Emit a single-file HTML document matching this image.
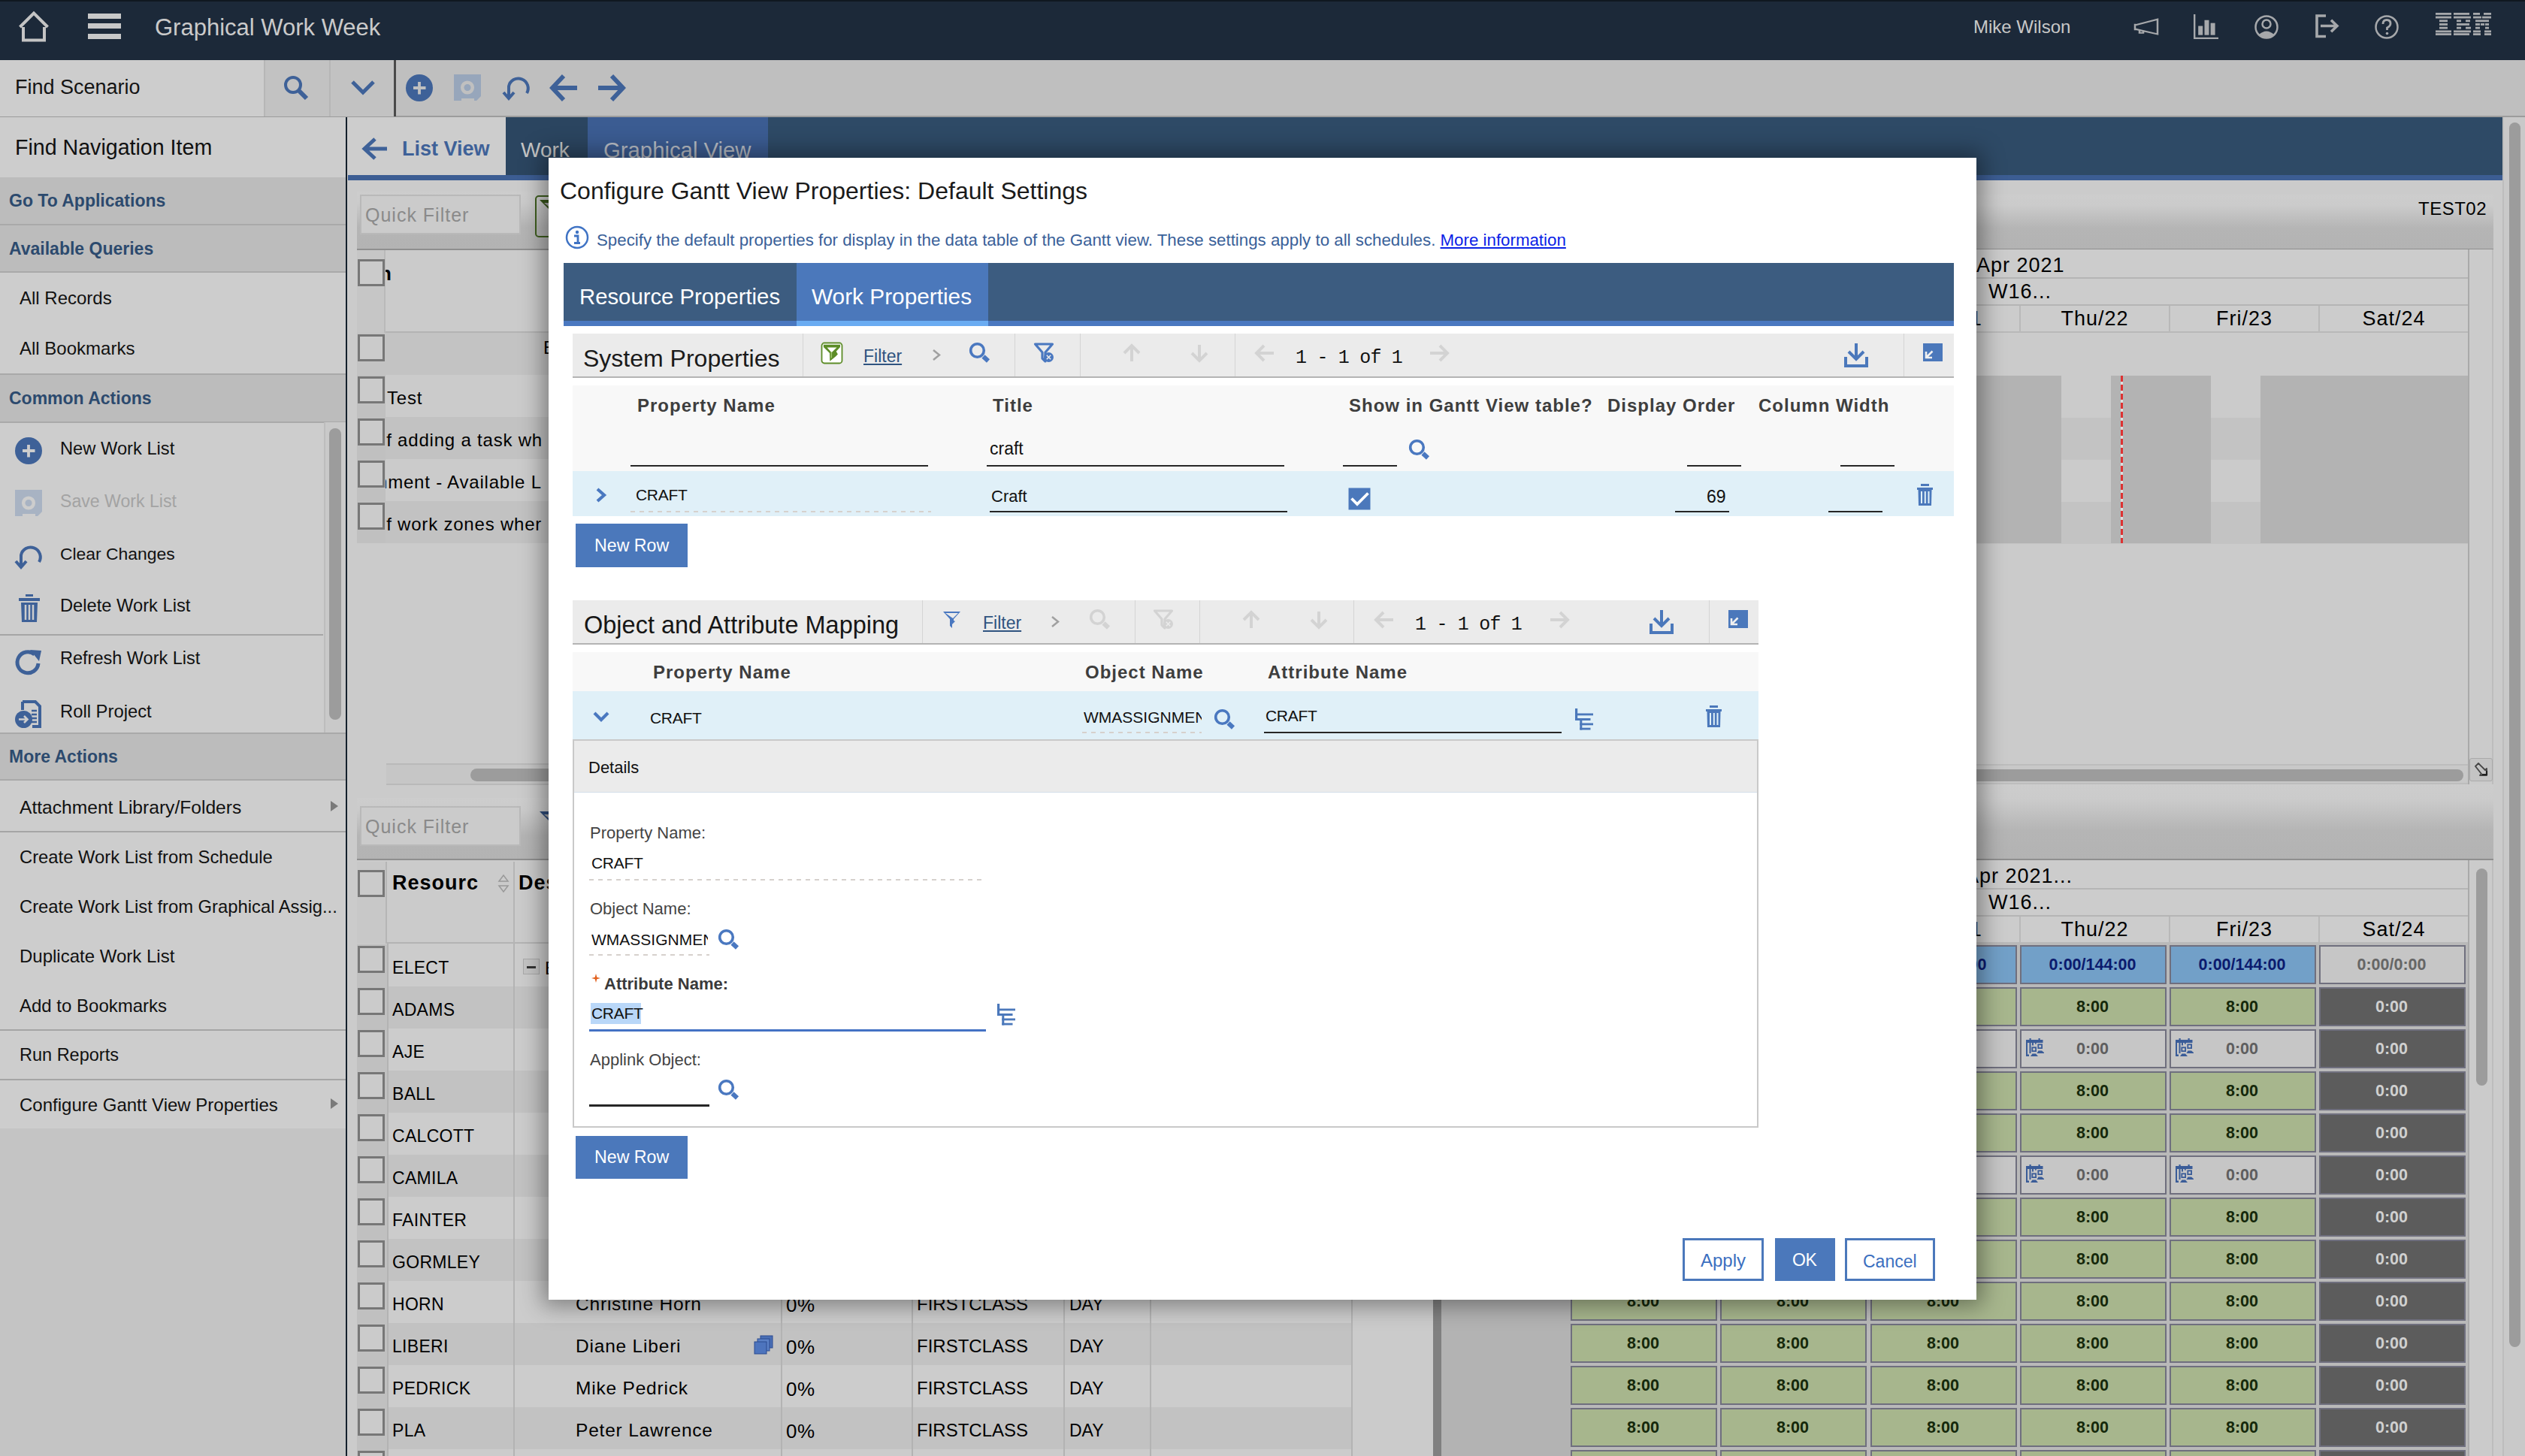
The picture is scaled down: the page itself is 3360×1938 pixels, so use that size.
<!DOCTYPE html>
<html><head><meta charset="utf-8">
<style>
*{box-sizing:border-box;margin:0;padding:0}
html,body{width:3360px;height:1938px;overflow:hidden;background:#c4c4c4;font-family:"Liberation Sans",sans-serif;color:#000}
.a{position:absolute}
.t{position:absolute;white-space:nowrap;line-height:1}
svg{position:absolute;overflow:visible}
/* header */
#hdr{left:0;top:0;width:3360px;height:80px;background:#1c2939;border-top:2px solid #101820}
#tb{left:0;top:80px;width:3360px;height:76px;background:#bfbfbf;border-bottom:2px solid #9c9c9c}
/* sidebar */
#side{left:0;top:157px;width:460px;height:1781px;background:#c4c4c4}
.sh{position:absolute;left:0;width:460px;background:#bcbcbc;border-bottom:2px solid #a9a9a9}
.sh span{position:absolute;left:12px;top:50%;transform:translateY(-50%);font-weight:bold;font-size:23px;color:#2c4a6e;white-space:nowrap;line-height:1}
.si{position:absolute;left:0;width:460px;background:#cdcdcd}
.si span{position:absolute;left:26px;top:50%;transform:translateY(-50%);font-size:24px;color:#111;white-space:nowrap;line-height:1}
/* modal */
#modal{left:730px;top:210px;width:1900px;height:1520px;background:#fff;box-shadow:0 0 30px 6px rgba(0,0,0,.35)}
</style></head><body>
<div id="hdr" class="a">
<svg style="left:24px;top:12px" width="42" height="44" viewBox="0 0 42 44"><path d="M2.5 22 L21 3.5 L39.5 22 M7 22 V39.5 H35 V22" fill="none" stroke="#c4c4c4" stroke-width="4" stroke-linejoin="miter"/></svg>
<div class="a" style="left:117px;top:16px;width:44px;height:7px;background:#c8c8c8"></div>
<div class="a" style="left:117px;top:29px;width:44px;height:7px;background:#c8c8c8"></div>
<div class="a" style="left:117px;top:43px;width:44px;height:7px;background:#c8c8c8"></div>
<div class="t" style="left:206px;top:19px;font-size:31px;color:#cacaca">Graphical Work Week</div>
<div class="t" style="left:2626px;top:22px;font-size:24px;color:#c8c8c8">Mike Wilson</div>
<svg style="left:2839px;top:22px" width="34" height="24" preserveAspectRatio="none" viewBox="0 0 34 28"><path d="M2 11 L32 2 V25 L2 17 Z M2 9 V19 M8 18 V23 H13 V20" fill="none" stroke="#a6a8ab" stroke-width="2.5"/></svg>
<svg style="left:2919px;top:17px" width="34" height="33" viewBox="0 0 34 34" preserveAspectRatio="none"><path d="M1.2 0 V32.8 H33" fill="none" stroke="#a6a8ab" stroke-width="2.4"/><rect x="6.2" y="16" width="6" height="12.5" fill="#a6a8ab"/><rect x="14.5" y="8" width="6" height="20.5" fill="#a6a8ab"/><rect x="22.6" y="12" width="6" height="16.5" fill="#a6a8ab"/></svg>
<svg style="left:3000px;top:18px" width="34" height="34" viewBox="0 0 34 34"><circle cx="16" cy="16" r="14.5" fill="none" stroke="#a6a8ab" stroke-width="2.5"/><circle cx="16" cy="12" r="5.5" fill="none" stroke="#a6a8ab" stroke-width="2.5"/><path d="M6 26 Q16 17 26 26 Q16 34 6 26Z" fill="#a6a8ab"/></svg>
<svg style="left:3079px;top:17px" width="36" height="33" preserveAspectRatio="none" viewBox="0 0 36 34"><path d="M16 2 H4 V30.5 H16 M9 16 H30 M23 8 L31 16 L23 24" fill="none" stroke="#a6a8ab" stroke-width="3.6"/></svg>
<svg style="left:3160px;top:18px" width="34" height="34" viewBox="0 0 34 34"><circle cx="16" cy="16" r="14.5" fill="none" stroke="#a6a8ab" stroke-width="2.5"/><path d="M11 12 Q11 6.5 16 6.5 Q21 6.5 21 11.5 Q21 14.5 16.5 17 V20" fill="none" stroke="#a6a8ab" stroke-width="2.8"/><circle cx="16.5" cy="24.5" r="1.8" fill="#a6a8ab"/></svg>
<svg style="left:3241px;top:15px" width="74" height="30" viewBox="0 0 74 32" preserveAspectRatio="none"><g fill="#a6a8ab">
<rect x="0" y="0" width="21" height="3"/><rect x="0" y="5" width="21" height="3"/><rect x="5" y="10" width="11" height="3"/><rect x="5" y="15" width="11" height="3"/><rect x="5" y="20" width="11" height="3"/><rect x="0" y="25" width="21" height="3"/><rect x="0" y="29" width="21" height="3"/>
<rect x="24" y="0" width="21" height="3"/><rect x="24" y="5" width="23" height="3"/><rect x="28" y="10" width="6" height="3"/><rect x="40" y="10" width="6" height="3"/><rect x="28" y="15" width="17" height="3"/><rect x="28" y="20" width="6" height="3"/><rect x="40" y="20" width="7" height="3"/><rect x="24" y="25" width="23" height="3"/><rect x="24" y="29" width="21" height="3"/>
<rect x="50" y="0" width="9" height="3"/><rect x="64" y="0" width="10" height="3"/><rect x="50" y="5" width="11" height="3"/><rect x="62" y="5" width="12" height="3"/><rect x="53" y="10" width="18" height="3"/><rect x="53" y="15" width="6" height="3"/><rect x="60" y="15" width="5" height="3"/><rect x="66" y="15" width="5" height="3"/><rect x="53" y="20" width="6" height="3"/><rect x="66" y="20" width="5" height="3"/><rect x="50" y="25" width="10" height="3"/><rect x="65" y="25" width="9" height="3"/><rect x="50" y="29" width="10" height="3"/><rect x="65" y="29" width="9" height="3"/>
</g></svg>
</div>
<div id="tb" class="a">
<div class="a" style="left:0;top:0;width:351px;height:75px;background:#cdcdcd"></div>
<div class="t" style="left:20px;top:23px;font-size:27px;color:#141414">Find Scenario</div>
<div class="a" style="left:351px;top:0;width:89px;height:75px;background:#c2c2c2;border-left:2px solid #b6b6b6;border-right:2px solid #b6b6b6"></div>
<div class="a" style="left:440px;top:0;width:85px;height:75px;background:#c2c2c2"></div>
<div class="a" style="left:524px;top:0;width:3px;height:75px;background:#4a4a4a"></div>
<svg style="left:377px;top:100px;top:20px" width="36" height="36" viewBox="0 0 36 36"><circle cx="13" cy="13" r="10" fill="none" stroke="#3e6198" stroke-width="4"/><path d="M21 21 L31 31" stroke="#3e6198" stroke-width="6"/></svg>
<svg style="left:466px;top:26px" width="36" height="22" viewBox="0 0 36 22"><path d="M3 3 L17 17 L31 3" fill="none" stroke="#3e6198" stroke-width="5"/></svg>
<svg style="left:540px;top:19px" width="36" height="36" viewBox="0 0 36 36"><circle cx="18" cy="18" r="18" fill="#3e6198"/><path d="M18 10 V26.5 M10 18 H26.5" stroke="#c0c0c0" stroke-width="3.8"/></svg>
<svg style="left:604px;top:19px" width="36" height="36" viewBox="0 0 36 36"><path d="M0 0 H36 V29 L30 35 H27 V32 H10 V35 H0 Z" fill="#97a6bb"/><circle cx="18" cy="17.5" r="6.8" fill="none" stroke="#c0c0c0" stroke-width="4.5"/></svg>
<svg style="left:668px;top:19px" width="38" height="38" viewBox="0 0 38 38"><path d="M9 30 V16 A13 13 0 1 1 33 25" fill="none" stroke="#3e6198" stroke-width="4"/><path d="M2 24 L9 32 L16 24" fill="none" stroke="#3e6198" stroke-width="4"/></svg>
<svg style="left:731px;top:18px" width="38" height="38" viewBox="0 0 38 38"><path d="M37 19 H6 M19 3 L4 19 L19 35" fill="none" stroke="#3e6198" stroke-width="5.8"/></svg>
<svg style="left:795px;top:18px" width="38" height="38" viewBox="0 0 38 38"><path d="M1 19 H32 M19 3 L34 19 L19 35" fill="none" stroke="#3e6198" stroke-width="5.8"/></svg>
</div>
<div id="side" class="a">
<div class="si" style="top:-1px;height:80px"><span style="left:20px;font-size:28.6px;color:#101010">Find Navigation Item</span></div>
<div class="sh" style="top:79px;height:64px"><span>Go To Applications</span></div>
<div class="sh" style="top:143px;height:63px"><span>Available Queries</span></div>
<div class="si" style="top:206px;height:67px"><span>All Records</span></div>
<div class="si" style="top:273px;height:67px"><span>All Bookmarks</span></div>
<div class="a" style="left:0;top:340px;width:460px;height:2px;background:#a9a9a9"></div>
<div class="sh" style="top:342px;height:64px"><span>Common Actions</span></div>
<div class="si" style="top:406px;height:412px;background:#cdcdcd"></div>
<div class="a" style="left:431px;top:405px;width:29px;height:413px;background:#c9c9c9;border-left:2px solid #bdbdbd"></div>
<div class="a" style="left:438px;top:413px;width:16px;height:388px;background:#9c9c9c;border-radius:8px"></div>
<div class="t" style="left:80px;top:429px;font-size:23.7px;color:#111">New Work List</div>
<div class="t" style="left:80px;top:499px;font-size:23.1px;color:#a3a3a3">Save Work List</div>
<div class="t" style="left:80px;top:569px;font-size:22.9px;color:#111">Clear Changes</div>
<div class="t" style="left:80px;top:638px;font-size:23.7px;color:#111">Delete Work List</div>
<div class="a" style="left:0;top:687px;width:430px;height:2px;background:#a5a5a5"></div>
<div class="t" style="left:80px;top:708px;font-size:23.5px;color:#111">Refresh Work List</div>
<div class="t" style="left:80px;top:778px;font-size:23.8px;color:#111">Roll Project</div>
<div class="a" style="left:0;top:818px;width:460px;height:2px;background:#a9a9a9"></div>
<div class="sh" style="top:820px;height:62px"><span>More Actions</span></div>
<div class="si" style="top:882px;height:463px"></div>
<div class="t" style="left:26px;top:906px;font-size:24.6px;color:#111">Attachment Library/Folders</div>
<div class="a" style="left:0;top:949px;width:460px;height:2px;background:#a5a5a5"></div>
<div class="t" style="left:26px;top:972px;font-size:23.8px;color:#111">Create Work List from Schedule</div>
<div class="t" style="left:26px;top:1038px;font-size:23.8px;color:#111">Create Work List from Graphical Assig...</div>
<div class="t" style="left:26px;top:1104px;font-size:24px;color:#111">Duplicate Work List</div>
<div class="t" style="left:26px;top:1170px;font-size:24px;color:#111">Add to Bookmarks</div>
<div class="a" style="left:0;top:1213px;width:460px;height:2px;background:#a5a5a5"></div>
<div class="t" style="left:26px;top:1236px;font-size:23.5px;color:#111">Run Reports</div>
<div class="a" style="left:0;top:1279px;width:460px;height:2px;background:#a5a5a5"></div>
<div class="t" style="left:26px;top:1302px;font-size:24px;color:#111">Configure Gantt View Properties</div>
<svg style="left:439px;top:908px" width="12" height="16" viewBox="0 0 12 16"><path d="M1 1 L11 8 L1 15Z" fill="#7a7a7a"/></svg>
<svg style="left:439px;top:1304px" width="12" height="16" viewBox="0 0 12 16"><path d="M1 1 L11 8 L1 15Z" fill="#7a7a7a"/></svg>
<svg style="left:20px;top:425px" width="36" height="36" viewBox="0 0 36 36"><circle cx="18" cy="18" r="18" fill="#3e6198"/><path d="M18 10 V26.5 M10 18 H26.5" stroke="#cdcdcd" stroke-width="3.8"/></svg>
<svg style="left:20px;top:495px" width="36" height="36" viewBox="0 0 36 36"><path d="M0 0 H36 V29 L30 35 H27 V32 H10 V35 H0 Z" fill="#a8b3c3"/><circle cx="18" cy="17.5" r="6.8" fill="none" stroke="#cdcdcd" stroke-width="4.5"/></svg>
<svg style="left:19px;top:566px" width="38" height="36" viewBox="0 0 38 36"><path d="M9 30 V16 A13 13 0 1 1 33 25" fill="none" stroke="#3e6198" stroke-width="4"/><path d="M2 24 L9 32 L16 24" fill="none" stroke="#3e6198" stroke-width="4"/></svg>
<svg style="left:25px;top:634px" width="28" height="38" viewBox="0 0 28 38"><rect x="9" y="0" width="10" height="3" fill="#3e6198"/><rect x="0" y="5" width="28" height="4" fill="#3e6198"/><path d="M3 11 H25 L24 37 H4 Z" fill="#3e6198"/><path d="M9 14 V34 M14 14 V34 M19 14 V34" stroke="#cdcdcd" stroke-width="2.5"/></svg>
<svg style="left:19px;top:706px" width="38" height="38" viewBox="0 0 38 38"><path d="M32 20 A14 14 0 1 1 27 8" fill="none" stroke="#3e6198" stroke-width="5"/><path d="M21 2 L36 3 L33 17 Z" fill="#3e6198"/></svg>
<svg style="left:19px;top:931px;top:774px" width="38" height="40" viewBox="0 0 38 40"><path d="M11 3 H28 L34 9 V36 H24" fill="none" stroke="#3e6198" stroke-width="4"/><path d="M11 3 V14" stroke="#3e6198" stroke-width="4"/><path d="M23 15 H30 M23 20 H30 M23 25 H30 M23 30 H30" stroke="#3e6198" stroke-width="2.5"/><circle cx="12.5" cy="26.5" r="11.5" fill="#3e6198"/><path d="M6 26.5 H17 M13 22 L17.5 26.5 L13 31" fill="none" stroke="#cdcdcd" stroke-width="2.6"/></svg>
</div>
<div id="main"><div class="a" style="left:460px;top:156px;width:2px;height:1782px;background:#14202c"></div>
<div class="a" style="left:462px;top:156px;width:2868px;height:1782px;background:#cbcbcb"></div>
<div class="a" style="left:463px;top:156px;width:2867px;height:77px;background:#2e4a66"></div>
<div class="a" style="left:463px;top:156px;width:210px;height:77px;background:#cdcdcd"></div>
<div class="a" style="left:673px;top:156px;width:109px;height:77px;background:#2b4560"></div>
<div class="a" style="left:782px;top:156px;width:240px;height:77px;background:#3b5c92"></div>
<div class="a" style="left:463px;top:233px;width:2867px;height:7px;background:#3c5d93"></div>
<svg style="left:482px;top:182px" width="34" height="32" viewBox="0 0 34 32"><path d="M33 16 H5 M17 3 L3 16 L17 29" fill="none" stroke="#3e6198" stroke-width="5"/></svg>
<div class="t" style="left:535px;top:185px;font-size:27px;font-weight:bold;color:#3e6198">List View</div>
<div class="t" style="left:693px;top:186px;font-size:28px;color:#c5c5c5">Work</div>
<div class="t" style="left:803px;top:185px;font-size:29.3px;color:#b9bec6">Graphical View</div>
<div class="a" style="left:475px;top:255px;width:300px;height:78px;background:linear-gradient(#cdcdcd 0%,#cbcbcb 20%,#b5b5b5 62%,#b3b3b3 100%);border-bottom:2px solid #8f8f8f"></div>
<div class="a" style="left:479px;top:259px;width:214px;height:53px;background:#cbcbcb;border:2px solid #b9b9b9"></div>
<div class="t" style="left:486px;top:274px;font-size:25px;letter-spacing:1px;color:#8a8a8a">Quick Filter</div>
<div class="a" style="left:712px;top:260px;width:44px;height:56px;border:2.5px solid #3e5e1e;border-radius:5px"></div>
<svg style="left:718px;top:266px" width="30" height="30" viewBox="0 0 30 30"><path d="M0 0 H28 L17 12 V26 L12 22 V12 Z" fill="#38561a"/><path d="M6 4 H22 L14.5 11Z" fill="#aaa"/></svg>
<div class="a" style="left:475px;top:333px;width:300px;height:110px;background:#cbcbcb;border-bottom:2px solid #b3b3b3"></div>
<div class="a" style="left:475px;top:333px;width:38px;height:110px;background:#c6c6c6;border-right:2px solid #b9b9b9"></div>
<div class="a" style="left:476px;top:345px;width:36px;height:36px;background:#cbcbcb;border:3px solid #777"></div>
<div class="a" style="left:513px;top:335px;width:15px;height:50px;overflow:hidden"><div class="t" style="left:-8px;top:16px;font-size:26px;font-weight:bold">n</div></div>
<div class="a" style="left:475px;top:443px;width:300px;height:56px;background:#c3c3c3"></div>
<div class="a" style="left:476px;top:445px;width:36px;height:36px;background:#cbcbcb;border:3px solid #777"></div>
<div class="t" style="left:723px;top:451px;font-size:24px">E</div>
<div class="a" style="left:475px;top:499px;width:300px;height:56px;background:#cbcbcb"></div>
<div class="a" style="left:475px;top:499px;width:38px;height:56px;background:#c0c0c0"></div>
<div class="a" style="left:476px;top:501px;width:36px;height:36px;background:#cbcbcb;border:3px solid #777"></div>
<div class="a" style="left:513px;top:499px;width:260px;height:56px;overflow:hidden"><div class="t" style="left:2px;top:19px;font-size:24px;letter-spacing:0.8px">Test</div></div>
<div class="a" style="left:475px;top:555px;width:300px;height:56px;background:#c2c2c2"></div>
<div class="a" style="left:475px;top:555px;width:38px;height:56px;background:#c0c0c0"></div>
<div class="a" style="left:476px;top:557px;width:36px;height:36px;background:#cbcbcb;border:3px solid #777"></div>
<div class="a" style="left:513px;top:555px;width:260px;height:56px;overflow:hidden"><div class="t" style="left:-13px;top:19px;font-size:24px;letter-spacing:0.8px">of adding a task wh</div></div>
<div class="a" style="left:475px;top:611px;width:300px;height:56px;background:#cbcbcb"></div>
<div class="a" style="left:475px;top:611px;width:38px;height:56px;background:#c0c0c0"></div>
<div class="a" style="left:476px;top:613px;width:36px;height:36px;background:#cbcbcb;border:3px solid #777"></div>
<div class="a" style="left:513px;top:611px;width:260px;height:56px;overflow:hidden"><div class="t" style="left:-11px;top:19px;font-size:24px;letter-spacing:0.8px">nment - Available L</div></div>
<div class="a" style="left:475px;top:667px;width:300px;height:56px;background:#c2c2c2"></div>
<div class="a" style="left:475px;top:667px;width:38px;height:56px;background:#c0c0c0"></div>
<div class="a" style="left:476px;top:669px;width:36px;height:36px;background:#cbcbcb;border:3px solid #777"></div>
<div class="a" style="left:513px;top:667px;width:260px;height:56px;overflow:hidden"><div class="t" style="left:-13px;top:19px;font-size:24px;letter-spacing:0.8px">of work zones wher</div></div>
<div class="a" style="left:514px;top:1016px;width:300px;height:29px;background:#c6c6c6;border-top:2px solid #b9b9b9;border-bottom:2px solid #b9b9b9"></div>
<div class="a" style="left:626px;top:1023px;width:300px;height:17px;background:#9c9c9c;border-radius:9px"></div>
<div class="a" style="left:475px;top:1062px;width:1435px;height:83px;background:linear-gradient(#cdcdcd 0%,#cbcbcb 20%,#b5b5b5 62%,#b3b3b3 100%);border-bottom:2px solid #8f8f8f"></div>
<div class="a" style="left:479px;top:1073px;width:214px;height:53px;background:#cbcbcb;border:2px solid #b9b9b9"></div>
<div class="t" style="left:486px;top:1088px;font-size:25px;letter-spacing:1px;color:#8a8a8a">Quick Filter</div>
<svg style="left:718px;top:1080px" width="30" height="30" viewBox="0 0 30 30"><path d="M0 0 H28 L17 12 V26 L12 22 V12 Z" fill="#2f4c7a"/><path d="M6 4 H22 L14.5 11Z" fill="#aaa"/></svg>
<div class="a" style="left:475px;top:1147px;width:1435px;height:109px;background:#cbcbcb;border-bottom:2px solid #b3b3b3"></div>
<div class="a" style="left:475px;top:1147px;width:40px;height:109px;background:#c8c8c8;border-right:2px solid #b5b5b5"></div>
<div class="a" style="left:476px;top:1158px;width:36px;height:36px;background:#cbcbcb;border:3px solid #777"></div>
<div class="t" style="left:522px;top:1162px;font-size:27px;letter-spacing:1px;font-weight:bold">Resourc</div>
<svg style="left:663px;top:1163px" width="14" height="26" viewBox="0 0 14 26"><path d="M1 10 L7 2 L13 10 Z M1 16 L7 24 L13 16 Z" fill="none" stroke="#999" stroke-width="1.5"/></svg>
<div class="a" style="left:683px;top:1147px;width:2px;height:109px;background:#b5b5b5"></div>
<div class="t" style="left:690px;top:1162px;font-size:27px;letter-spacing:1px;font-weight:bold">Description</div>
<div class="a" style="left:475px;top:1257px;width:1325px;height:56px;background:#cccccc"></div>
<div class="a" style="left:475px;top:1257px;width:40px;height:56px;background:#c0c0c0"></div>
<div class="a" style="left:476px;top:1259px;width:36px;height:36px;background:#cbcbcb;border:3px solid #777"></div>
<div class="t" style="left:522px;top:1277px;font-size:23px;letter-spacing:0.3px">ELECT</div>
<div class="a" style="left:475px;top:1313px;width:1325px;height:56px;background:#c2c2c2"></div>
<div class="a" style="left:475px;top:1313px;width:40px;height:56px;background:#c0c0c0"></div>
<div class="a" style="left:476px;top:1315px;width:36px;height:36px;background:#cbcbcb;border:3px solid #777"></div>
<div class="t" style="left:522px;top:1333px;font-size:23px;letter-spacing:0.3px">ADAMS</div>
<div class="a" style="left:475px;top:1369px;width:1325px;height:56px;background:#cccccc"></div>
<div class="a" style="left:475px;top:1369px;width:40px;height:56px;background:#c0c0c0"></div>
<div class="a" style="left:476px;top:1371px;width:36px;height:36px;background:#cbcbcb;border:3px solid #777"></div>
<div class="t" style="left:522px;top:1389px;font-size:23px;letter-spacing:0.3px">AJE</div>
<div class="a" style="left:475px;top:1425px;width:1325px;height:56px;background:#c2c2c2"></div>
<div class="a" style="left:475px;top:1425px;width:40px;height:56px;background:#c0c0c0"></div>
<div class="a" style="left:476px;top:1427px;width:36px;height:36px;background:#cbcbcb;border:3px solid #777"></div>
<div class="t" style="left:522px;top:1445px;font-size:23px;letter-spacing:0.3px">BALL</div>
<div class="a" style="left:475px;top:1481px;width:1325px;height:56px;background:#cccccc"></div>
<div class="a" style="left:475px;top:1481px;width:40px;height:56px;background:#c0c0c0"></div>
<div class="a" style="left:476px;top:1483px;width:36px;height:36px;background:#cbcbcb;border:3px solid #777"></div>
<div class="t" style="left:522px;top:1501px;font-size:23px;letter-spacing:0.3px">CALCOTT</div>
<div class="a" style="left:475px;top:1537px;width:1325px;height:56px;background:#c2c2c2"></div>
<div class="a" style="left:475px;top:1537px;width:40px;height:56px;background:#c0c0c0"></div>
<div class="a" style="left:476px;top:1539px;width:36px;height:36px;background:#cbcbcb;border:3px solid #777"></div>
<div class="t" style="left:522px;top:1557px;font-size:23px;letter-spacing:0.3px">CAMILA</div>
<div class="a" style="left:475px;top:1593px;width:1325px;height:56px;background:#cccccc"></div>
<div class="a" style="left:475px;top:1593px;width:40px;height:56px;background:#c0c0c0"></div>
<div class="a" style="left:476px;top:1595px;width:36px;height:36px;background:#cbcbcb;border:3px solid #777"></div>
<div class="t" style="left:522px;top:1613px;font-size:23px;letter-spacing:0.3px">FAINTER</div>
<div class="a" style="left:475px;top:1649px;width:1325px;height:56px;background:#c2c2c2"></div>
<div class="a" style="left:475px;top:1649px;width:40px;height:56px;background:#c0c0c0"></div>
<div class="a" style="left:476px;top:1651px;width:36px;height:36px;background:#cbcbcb;border:3px solid #777"></div>
<div class="t" style="left:522px;top:1669px;font-size:23px;letter-spacing:0.3px">GORMLEY</div>
<div class="a" style="left:475px;top:1705px;width:1325px;height:56px;background:#cccccc"></div>
<div class="a" style="left:475px;top:1705px;width:40px;height:56px;background:#c0c0c0"></div>
<div class="a" style="left:476px;top:1707px;width:36px;height:36px;background:#cbcbcb;border:3px solid #777"></div>
<div class="t" style="left:522px;top:1725px;font-size:23px;letter-spacing:0.3px">HORN</div>
<div class="t" style="left:766px;top:1724px;font-size:24.5px;letter-spacing:0.8px">Christine Horn</div>
<div class="t" style="left:1046px;top:1724px;font-size:26px;letter-spacing:0.5px">0%</div>
<div class="t" style="left:1220px;top:1724px;font-size:24px">FIRSTCLASS</div>
<div class="t" style="left:1423px;top:1725px;font-size:23px">DAY</div>
<div class="a" style="left:475px;top:1761px;width:1325px;height:56px;background:#c2c2c2"></div>
<div class="a" style="left:475px;top:1761px;width:40px;height:56px;background:#c0c0c0"></div>
<div class="a" style="left:476px;top:1763px;width:36px;height:36px;background:#cbcbcb;border:3px solid #777"></div>
<div class="t" style="left:522px;top:1781px;font-size:23px;letter-spacing:0.3px">LIBERI</div>
<div class="t" style="left:766px;top:1780px;font-size:24.5px;letter-spacing:0.8px">Diane Liberi</div>
<div class="t" style="left:1046px;top:1780px;font-size:26px;letter-spacing:0.5px">0%</div>
<div class="t" style="left:1220px;top:1780px;font-size:24px">FIRSTCLASS</div>
<div class="t" style="left:1423px;top:1781px;font-size:23px">DAY</div>
<div class="a" style="left:475px;top:1817px;width:1325px;height:56px;background:#cccccc"></div>
<div class="a" style="left:475px;top:1817px;width:40px;height:56px;background:#c0c0c0"></div>
<div class="a" style="left:476px;top:1819px;width:36px;height:36px;background:#cbcbcb;border:3px solid #777"></div>
<div class="t" style="left:522px;top:1837px;font-size:23px;letter-spacing:0.3px">PEDRICK</div>
<div class="t" style="left:766px;top:1836px;font-size:24.5px;letter-spacing:0.8px">Mike Pedrick</div>
<div class="t" style="left:1046px;top:1836px;font-size:26px;letter-spacing:0.5px">0%</div>
<div class="t" style="left:1220px;top:1836px;font-size:24px">FIRSTCLASS</div>
<div class="t" style="left:1423px;top:1837px;font-size:23px">DAY</div>
<div class="a" style="left:475px;top:1873px;width:1325px;height:56px;background:#c2c2c2"></div>
<div class="a" style="left:475px;top:1873px;width:40px;height:56px;background:#c0c0c0"></div>
<div class="a" style="left:476px;top:1875px;width:36px;height:36px;background:#cbcbcb;border:3px solid #777"></div>
<div class="t" style="left:522px;top:1893px;font-size:23px;letter-spacing:0.3px">PLA</div>
<div class="t" style="left:766px;top:1892px;font-size:24.5px;letter-spacing:0.8px">Peter Lawrence</div>
<div class="t" style="left:1046px;top:1892px;font-size:26px;letter-spacing:0.5px">0%</div>
<div class="t" style="left:1220px;top:1892px;font-size:24px">FIRSTCLASS</div>
<div class="t" style="left:1423px;top:1893px;font-size:23px">DAY</div>
<div class="a" style="left:475px;top:1929px;width:1325px;height:56px;background:#cccccc"></div>
<div class="a" style="left:475px;top:1929px;width:40px;height:56px;background:#c0c0c0"></div>
<div class="a" style="left:476px;top:1931px;width:36px;height:36px;background:#cbcbcb;border:3px solid #777"></div>
<div class="t" style="left:766px;top:1948px;font-size:24.5px;letter-spacing:0.8px"></div>
<div class="t" style="left:1046px;top:1948px;font-size:26px;letter-spacing:0.5px">0%</div>
<div class="t" style="left:1220px;top:1948px;font-size:24px">FIRSTCLASS</div>
<div class="t" style="left:1423px;top:1949px;font-size:23px">DAY</div>
<div class="a" style="left:515px;top:1256px;width:2px;height:700px;background:#b3b3b3"></div>
<div class="a" style="left:683px;top:1256px;width:2px;height:700px;background:#b3b3b3"></div>
<div class="a" style="left:1039px;top:1256px;width:2px;height:700px;background:#b3b3b3"></div>
<div class="a" style="left:1213px;top:1256px;width:2px;height:700px;background:#b3b3b3"></div>
<div class="a" style="left:1415px;top:1256px;width:2px;height:700px;background:#b3b3b3"></div>
<div class="a" style="left:1530px;top:1256px;width:2px;height:700px;background:#b3b3b3"></div>
<div class="a" style="left:1798px;top:1256px;width:2px;height:700px;background:#b3b3b3"></div>
<div class="a" style="left:696px;top:1276px;width:22px;height:21px;background:#c4c4c4;border:1px solid #a9a9a9"></div><div class="a" style="left:701px;top:1286px;width:12px;height:3px;background:#333"></div>
<div class="t" style="left:725px;top:1277px;font-size:24px;letter-spacing:0.8px">Electrician</div>
<svg style="left:1004px;top:1778px" width="24" height="24" viewBox="0 0 24 24"><rect x="8" y="0" width="16" height="16" fill="#4a6fb5" stroke="#2a4a90"/><rect x="4" y="4" width="16" height="16" fill="#5a80c5" stroke="#2a4a90"/><rect x="0" y="8" width="16" height="16" fill="#4d74bd" stroke="#2a4a90"/></svg>
<div class="a" style="left:1907px;top:1145px;width:11px;height:793px;background:#808080"></div>
<div class="a" style="left:1907px;top:250px;width:11px;height:800px;background:#808080"></div>
<div class="a" style="left:1918px;top:259px;width:1400px;height:74px;background:linear-gradient(#cdcdcd 0%,#cbcbcb 20%,#b5b5b5 62%,#b3b3b3 100%);border-bottom:2px solid #8f8f8f"></div>
<div class="t" style="left:3218px;top:266px;font-size:24px;letter-spacing:0.5px">TEST02</div>
<div class="a" style="left:1918px;top:332px;width:1366px;height:111px;background:#cccccc"></div>
<div class="a" style="left:1918px;top:369px;width:1366px;height:2px;background:#b5b5b5"></div>
<div class="a" style="left:1918px;top:405px;width:1366px;height:2px;background:#b5b5b5"></div>
<div class="a" style="left:1918px;top:441px;width:1366px;height:3px;background:#b9b9b9"></div>
<div class="t" style="left:2630px;top:340px;font-size:27px;letter-spacing:1px">Apr 2021</div>
<div class="t" style="left:2646px;top:375px;font-size:27px;letter-spacing:1px">W16...</div>
<div class="a" style="left:2089px;top:407px;width:2px;height:34px;background:#b9b9b9"></div>
<div class="t" style="left:2090px;top:411px;width:199px;text-align:center;font-size:27px;letter-spacing:1px">Mon/19</div>
<div class="a" style="left:2288px;top:407px;width:2px;height:34px;background:#b9b9b9"></div>
<div class="t" style="left:2289px;top:411px;width:199px;text-align:center;font-size:27px;letter-spacing:1px">Tue/20</div>
<div class="a" style="left:2488px;top:407px;width:2px;height:34px;background:#b9b9b9"></div>
<div class="t" style="left:2489px;top:411px;width:199px;text-align:center;font-size:27px;letter-spacing:1px">Wed/21</div>
<div class="a" style="left:2687px;top:407px;width:2px;height:34px;background:#b9b9b9"></div>
<div class="t" style="left:2688px;top:411px;width:199px;text-align:center;font-size:27px;letter-spacing:1px">Thu/22</div>
<div class="a" style="left:2886px;top:407px;width:2px;height:34px;background:#b9b9b9"></div>
<div class="t" style="left:2887px;top:411px;width:199px;text-align:center;font-size:27px;letter-spacing:1px">Fri/23</div>
<div class="a" style="left:3085px;top:407px;width:2px;height:34px;background:#b9b9b9"></div>
<div class="t" style="left:3086px;top:411px;width:199px;text-align:center;font-size:27px;letter-spacing:1px">Sat/24</div>
<div class="a" style="left:3284px;top:332px;width:2px;height:111px;background:#a9a9a9"></div>
<div class="a" style="left:1918px;top:443px;width:1366px;height:574px;background:#cbcbcb"></div>
<div class="a" style="left:1918px;top:500px;width:1366px;height:56px;background:#cbcbcb"></div>
<div class="a" style="left:1918px;top:556px;width:1366px;height:56px;background:#c3c3c3"></div>
<div class="a" style="left:1918px;top:612px;width:1366px;height:56px;background:#cbcbcb"></div>
<div class="a" style="left:1918px;top:668px;width:1366px;height:56px;background:#c3c3c3"></div>
<div class="a" style="left:1918px;top:500px;width:1366px;height:223px;background:#b3b3b3"></div>
<div class="a" style="left:2145px;top:500px;width:66px;height:56px;background:#cbcbcb"></div>
<div class="a" style="left:2145px;top:556px;width:66px;height:56px;background:#c3c3c3"></div>
<div class="a" style="left:2145px;top:612px;width:66px;height:56px;background:#cbcbcb"></div>
<div class="a" style="left:2145px;top:668px;width:66px;height:56px;background:#c3c3c3"></div>
<div class="a" style="left:2344px;top:500px;width:66px;height:56px;background:#cbcbcb"></div>
<div class="a" style="left:2344px;top:556px;width:66px;height:56px;background:#c3c3c3"></div>
<div class="a" style="left:2344px;top:612px;width:66px;height:56px;background:#cbcbcb"></div>
<div class="a" style="left:2344px;top:668px;width:66px;height:56px;background:#c3c3c3"></div>
<div class="a" style="left:2544px;top:500px;width:66px;height:56px;background:#cbcbcb"></div>
<div class="a" style="left:2544px;top:556px;width:66px;height:56px;background:#c3c3c3"></div>
<div class="a" style="left:2544px;top:612px;width:66px;height:56px;background:#cbcbcb"></div>
<div class="a" style="left:2544px;top:668px;width:66px;height:56px;background:#c3c3c3"></div>
<div class="a" style="left:2743px;top:500px;width:66px;height:56px;background:#cbcbcb"></div>
<div class="a" style="left:2743px;top:556px;width:66px;height:56px;background:#c3c3c3"></div>
<div class="a" style="left:2743px;top:612px;width:66px;height:56px;background:#cbcbcb"></div>
<div class="a" style="left:2743px;top:668px;width:66px;height:56px;background:#c3c3c3"></div>
<div class="a" style="left:2942px;top:500px;width:66px;height:56px;background:#cbcbcb"></div>
<div class="a" style="left:2942px;top:556px;width:66px;height:56px;background:#c3c3c3"></div>
<div class="a" style="left:2942px;top:612px;width:66px;height:56px;background:#cbcbcb"></div>
<div class="a" style="left:2942px;top:668px;width:66px;height:56px;background:#c3c3c3"></div>
<div class="a" style="left:2822px;top:500px;width:3px;height:223px;background:repeating-linear-gradient(#d33 0 8px,#ddd 8px 12px)"></div>
<div class="a" style="left:3284px;top:332px;width:34px;height:712px;background:#cbcbcb;border-left:2px solid #a9a9a9;border-right:2px solid #bdbdbd"></div>
<div class="a" style="left:1918px;top:1017px;width:1366px;height:27px;background:#c8c8c8;border-top:2px solid #bdbdbd;border-bottom:2px solid #bdbdbd"></div>
<div class="a" style="left:2200px;top:1024px;width:1078px;height:16px;background:#9c9c9c;border-radius:8px"></div>
<div class="a" style="left:3286px;top:1009px;width:31px;height:31px;background:#c4c4c4;border:1px solid #aaa;border-radius:3px"></div>
<svg style="left:3292px;top:1014px" width="22" height="22" viewBox="0 0 22 22"><path d="M2 6 L6 2 L15 11 L17 9 V18 H8 L10 16 Z" fill="none" stroke="#444" stroke-width="1.8" stroke-linejoin="round"/><path d="M11 17 H17 V12" fill="none" stroke="#222" stroke-width="2.2"/></svg>
<div class="a" style="left:1918px;top:1044px;width:1400px;height:101px;background:linear-gradient(#cdcdcd 0%,#cbcbcb 20%,#b5b5b5 62%,#b3b3b3 100%);border-bottom:2px solid #8f8f8f"></div>
<div class="a" style="left:1918px;top:1145px;width:1366px;height:111px;background:#cccccc"></div>
<div class="a" style="left:1918px;top:1182px;width:1366px;height:2px;background:#b5b5b5"></div>
<div class="a" style="left:1918px;top:1218px;width:1366px;height:2px;background:#b5b5b5"></div>
<div class="a" style="left:1918px;top:1254px;width:1366px;height:3px;background:#b9b9b9"></div>
<div class="t" style="left:2615px;top:1153px;font-size:27px;letter-spacing:1px">Apr 2021...</div>
<div class="t" style="left:2646px;top:1188px;font-size:27px;letter-spacing:1px">W16...</div>
<div class="a" style="left:2089px;top:1220px;width:2px;height:34px;background:#b9b9b9"></div>
<div class="t" style="left:2090px;top:1224px;width:199px;text-align:center;font-size:27px;letter-spacing:1px">Mon/19</div>
<div class="a" style="left:2288px;top:1220px;width:2px;height:34px;background:#b9b9b9"></div>
<div class="t" style="left:2289px;top:1224px;width:199px;text-align:center;font-size:27px;letter-spacing:1px">Tue/20</div>
<div class="a" style="left:2488px;top:1220px;width:2px;height:34px;background:#b9b9b9"></div>
<div class="t" style="left:2489px;top:1224px;width:199px;text-align:center;font-size:27px;letter-spacing:1px">Wed/21</div>
<div class="a" style="left:2687px;top:1220px;width:2px;height:34px;background:#b9b9b9"></div>
<div class="t" style="left:2688px;top:1224px;width:199px;text-align:center;font-size:27px;letter-spacing:1px">Thu/22</div>
<div class="a" style="left:2886px;top:1220px;width:2px;height:34px;background:#b9b9b9"></div>
<div class="t" style="left:2887px;top:1224px;width:199px;text-align:center;font-size:27px;letter-spacing:1px">Fri/23</div>
<div class="a" style="left:3085px;top:1220px;width:2px;height:34px;background:#b9b9b9"></div>
<div class="t" style="left:3086px;top:1224px;width:199px;text-align:center;font-size:27px;letter-spacing:1px">Sat/24</div>
<div class="a" style="left:3284px;top:1145px;width:2px;height:111px;background:#a9a9a9"></div>
<div class="a" style="left:1918px;top:1256px;width:1366px;height:700px;background:#b9b9b9"></div>
<div class="a" style="left:1918px;top:1256px;width:172px;height:700px;background:#b3b3b3"></div>
<div class="a" style="left:2090px;top:1258px;width:195px;height:52px;background:#72a0c8;border:2px solid #6f6f7e"></div>
<div class="t" style="left:2089px;top:1274px;width:195px;text-align:center;font-size:21.5px;font-weight:bold;color:#0b1a6e">0:00/144:00</div>
<div class="a" style="left:2289px;top:1258px;width:195px;height:52px;background:#72a0c8;border:2px solid #6f6f7e"></div>
<div class="t" style="left:2288px;top:1274px;width:195px;text-align:center;font-size:21.5px;font-weight:bold;color:#0b1a6e">0:00/144:00</div>
<div class="a" style="left:2489px;top:1258px;width:195px;height:52px;background:#72a0c8;border:2px solid #6f6f7e"></div>
<div class="t" style="left:2488px;top:1274px;width:195px;text-align:center;font-size:21.5px;font-weight:bold;color:#0b1a6e">0:00/144:00</div>
<div class="a" style="left:2688px;top:1258px;width:195px;height:52px;background:#72a0c8;border:2px solid #6f6f7e"></div>
<div class="t" style="left:2687px;top:1274px;width:195px;text-align:center;font-size:21.5px;font-weight:bold;color:#0b1a6e">0:00/144:00</div>
<div class="a" style="left:2887px;top:1258px;width:195px;height:52px;background:#72a0c8;border:2px solid #6f6f7e"></div>
<div class="t" style="left:2886px;top:1274px;width:195px;text-align:center;font-size:21.5px;font-weight:bold;color:#0b1a6e">0:00/144:00</div>
<div class="a" style="left:3086px;top:1258px;width:195px;height:52px;background:#c6c6c6;border:2px solid #6f6f7e"></div>
<div class="t" style="left:3085px;top:1274px;width:195px;text-align:center;font-size:21.5px;font-weight:bold;color:#666">0:00/0:00</div>
<div class="a" style="left:2090px;top:1314px;width:195px;height:52px;background:#a7b68d;border:2px solid #6f6f7e"></div>
<div class="t" style="left:2089px;top:1330px;width:195px;text-align:center;font-size:21.5px;font-weight:bold;color:#15280a">8:00</div>
<div class="a" style="left:2289px;top:1314px;width:195px;height:52px;background:#a7b68d;border:2px solid #6f6f7e"></div>
<div class="t" style="left:2288px;top:1330px;width:195px;text-align:center;font-size:21.5px;font-weight:bold;color:#15280a">8:00</div>
<div class="a" style="left:2489px;top:1314px;width:195px;height:52px;background:#a7b68d;border:2px solid #6f6f7e"></div>
<div class="t" style="left:2488px;top:1330px;width:195px;text-align:center;font-size:21.5px;font-weight:bold;color:#15280a">8:00</div>
<div class="a" style="left:2688px;top:1314px;width:195px;height:52px;background:#a7b68d;border:2px solid #6f6f7e"></div>
<div class="t" style="left:2687px;top:1330px;width:195px;text-align:center;font-size:21.5px;font-weight:bold;color:#15280a">8:00</div>
<div class="a" style="left:2887px;top:1314px;width:195px;height:52px;background:#a7b68d;border:2px solid #6f6f7e"></div>
<div class="t" style="left:2886px;top:1330px;width:195px;text-align:center;font-size:21.5px;font-weight:bold;color:#15280a">8:00</div>
<div class="a" style="left:3086px;top:1314px;width:195px;height:52px;background:#5c5c5c;border:2px solid #6f6f7e"></div>
<div class="t" style="left:3085px;top:1330px;width:195px;text-align:center;font-size:21.5px;font-weight:bold;color:#d0d0d0">0:00</div>
<div class="a" style="left:2090px;top:1370px;width:195px;height:52px;background:#c6c6c6;border:2px solid #6f6f7e"></div>
<div class="t" style="left:2089px;top:1386px;width:195px;text-align:center;font-size:21.5px;font-weight:bold;color:#5e5e5e">0:00</div>
<svg style="left:2098px;top:1382px" width="24" height="24" viewBox="0 0 24 24"><g fill="#3a5c98"><rect x="0" y="2" width="22.5" height="4"/><rect x="4.5" y="0" width="2.2" height="3"/><rect x="16.5" y="0" width="2.2" height="3"/><rect x="0" y="2" width="2" height="22"/><rect x="4.5" y="6" width="2" height="14"/><rect x="0" y="21.5" width="4" height="2.5"/><rect x="8" y="6" width="2" height="3.5"/><path d="M11.5 6 H14 L13 8.5Z"/><path d="M6 24 L8.5 20.5 H13 L16 24Z"/><path d="M14.5 20 L16.5 16.5 H21 L24 19 V20Z"/></g><g fill="none" stroke="#3a5c98" stroke-width="1.8"><rect x="8.3" y="12.3" width="4.8" height="4.8"/><rect x="16.3" y="8.3" width="4.8" height="4.8"/></g></svg>
<div class="a" style="left:2289px;top:1370px;width:195px;height:52px;background:#c6c6c6;border:2px solid #6f6f7e"></div>
<div class="t" style="left:2288px;top:1386px;width:195px;text-align:center;font-size:21.5px;font-weight:bold;color:#5e5e5e">0:00</div>
<svg style="left:2297px;top:1382px" width="24" height="24" viewBox="0 0 24 24"><g fill="#3a5c98"><rect x="0" y="2" width="22.5" height="4"/><rect x="4.5" y="0" width="2.2" height="3"/><rect x="16.5" y="0" width="2.2" height="3"/><rect x="0" y="2" width="2" height="22"/><rect x="4.5" y="6" width="2" height="14"/><rect x="0" y="21.5" width="4" height="2.5"/><rect x="8" y="6" width="2" height="3.5"/><path d="M11.5 6 H14 L13 8.5Z"/><path d="M6 24 L8.5 20.5 H13 L16 24Z"/><path d="M14.5 20 L16.5 16.5 H21 L24 19 V20Z"/></g><g fill="none" stroke="#3a5c98" stroke-width="1.8"><rect x="8.3" y="12.3" width="4.8" height="4.8"/><rect x="16.3" y="8.3" width="4.8" height="4.8"/></g></svg>
<div class="a" style="left:2489px;top:1370px;width:195px;height:52px;background:#c6c6c6;border:2px solid #6f6f7e"></div>
<div class="t" style="left:2488px;top:1386px;width:195px;text-align:center;font-size:21.5px;font-weight:bold;color:#5e5e5e">0:00</div>
<svg style="left:2497px;top:1382px" width="24" height="24" viewBox="0 0 24 24"><g fill="#3a5c98"><rect x="0" y="2" width="22.5" height="4"/><rect x="4.5" y="0" width="2.2" height="3"/><rect x="16.5" y="0" width="2.2" height="3"/><rect x="0" y="2" width="2" height="22"/><rect x="4.5" y="6" width="2" height="14"/><rect x="0" y="21.5" width="4" height="2.5"/><rect x="8" y="6" width="2" height="3.5"/><path d="M11.5 6 H14 L13 8.5Z"/><path d="M6 24 L8.5 20.5 H13 L16 24Z"/><path d="M14.5 20 L16.5 16.5 H21 L24 19 V20Z"/></g><g fill="none" stroke="#3a5c98" stroke-width="1.8"><rect x="8.3" y="12.3" width="4.8" height="4.8"/><rect x="16.3" y="8.3" width="4.8" height="4.8"/></g></svg>
<div class="a" style="left:2688px;top:1370px;width:195px;height:52px;background:#c6c6c6;border:2px solid #6f6f7e"></div>
<div class="t" style="left:2687px;top:1386px;width:195px;text-align:center;font-size:21.5px;font-weight:bold;color:#5e5e5e">0:00</div>
<svg style="left:2696px;top:1382px" width="24" height="24" viewBox="0 0 24 24"><g fill="#3a5c98"><rect x="0" y="2" width="22.5" height="4"/><rect x="4.5" y="0" width="2.2" height="3"/><rect x="16.5" y="0" width="2.2" height="3"/><rect x="0" y="2" width="2" height="22"/><rect x="4.5" y="6" width="2" height="14"/><rect x="0" y="21.5" width="4" height="2.5"/><rect x="8" y="6" width="2" height="3.5"/><path d="M11.5 6 H14 L13 8.5Z"/><path d="M6 24 L8.5 20.5 H13 L16 24Z"/><path d="M14.5 20 L16.5 16.5 H21 L24 19 V20Z"/></g><g fill="none" stroke="#3a5c98" stroke-width="1.8"><rect x="8.3" y="12.3" width="4.8" height="4.8"/><rect x="16.3" y="8.3" width="4.8" height="4.8"/></g></svg>
<div class="a" style="left:2887px;top:1370px;width:195px;height:52px;background:#c6c6c6;border:2px solid #6f6f7e"></div>
<div class="t" style="left:2886px;top:1386px;width:195px;text-align:center;font-size:21.5px;font-weight:bold;color:#5e5e5e">0:00</div>
<svg style="left:2895px;top:1382px" width="24" height="24" viewBox="0 0 24 24"><g fill="#3a5c98"><rect x="0" y="2" width="22.5" height="4"/><rect x="4.5" y="0" width="2.2" height="3"/><rect x="16.5" y="0" width="2.2" height="3"/><rect x="0" y="2" width="2" height="22"/><rect x="4.5" y="6" width="2" height="14"/><rect x="0" y="21.5" width="4" height="2.5"/><rect x="8" y="6" width="2" height="3.5"/><path d="M11.5 6 H14 L13 8.5Z"/><path d="M6 24 L8.5 20.5 H13 L16 24Z"/><path d="M14.5 20 L16.5 16.5 H21 L24 19 V20Z"/></g><g fill="none" stroke="#3a5c98" stroke-width="1.8"><rect x="8.3" y="12.3" width="4.8" height="4.8"/><rect x="16.3" y="8.3" width="4.8" height="4.8"/></g></svg>
<div class="a" style="left:3086px;top:1370px;width:195px;height:52px;background:#5c5c5c;border:2px solid #6f6f7e"></div>
<div class="t" style="left:3085px;top:1386px;width:195px;text-align:center;font-size:21.5px;font-weight:bold;color:#d0d0d0">0:00</div>
<div class="a" style="left:2090px;top:1426px;width:195px;height:52px;background:#a7b68d;border:2px solid #6f6f7e"></div>
<div class="t" style="left:2089px;top:1442px;width:195px;text-align:center;font-size:21.5px;font-weight:bold;color:#15280a">8:00</div>
<div class="a" style="left:2289px;top:1426px;width:195px;height:52px;background:#a7b68d;border:2px solid #6f6f7e"></div>
<div class="t" style="left:2288px;top:1442px;width:195px;text-align:center;font-size:21.5px;font-weight:bold;color:#15280a">8:00</div>
<div class="a" style="left:2489px;top:1426px;width:195px;height:52px;background:#a7b68d;border:2px solid #6f6f7e"></div>
<div class="t" style="left:2488px;top:1442px;width:195px;text-align:center;font-size:21.5px;font-weight:bold;color:#15280a">8:00</div>
<div class="a" style="left:2688px;top:1426px;width:195px;height:52px;background:#a7b68d;border:2px solid #6f6f7e"></div>
<div class="t" style="left:2687px;top:1442px;width:195px;text-align:center;font-size:21.5px;font-weight:bold;color:#15280a">8:00</div>
<div class="a" style="left:2887px;top:1426px;width:195px;height:52px;background:#a7b68d;border:2px solid #6f6f7e"></div>
<div class="t" style="left:2886px;top:1442px;width:195px;text-align:center;font-size:21.5px;font-weight:bold;color:#15280a">8:00</div>
<div class="a" style="left:3086px;top:1426px;width:195px;height:52px;background:#5c5c5c;border:2px solid #6f6f7e"></div>
<div class="t" style="left:3085px;top:1442px;width:195px;text-align:center;font-size:21.5px;font-weight:bold;color:#d0d0d0">0:00</div>
<div class="a" style="left:2090px;top:1482px;width:195px;height:52px;background:#a7b68d;border:2px solid #6f6f7e"></div>
<div class="t" style="left:2089px;top:1498px;width:195px;text-align:center;font-size:21.5px;font-weight:bold;color:#15280a">8:00</div>
<div class="a" style="left:2289px;top:1482px;width:195px;height:52px;background:#a7b68d;border:2px solid #6f6f7e"></div>
<div class="t" style="left:2288px;top:1498px;width:195px;text-align:center;font-size:21.5px;font-weight:bold;color:#15280a">8:00</div>
<div class="a" style="left:2489px;top:1482px;width:195px;height:52px;background:#a7b68d;border:2px solid #6f6f7e"></div>
<div class="t" style="left:2488px;top:1498px;width:195px;text-align:center;font-size:21.5px;font-weight:bold;color:#15280a">8:00</div>
<div class="a" style="left:2688px;top:1482px;width:195px;height:52px;background:#a7b68d;border:2px solid #6f6f7e"></div>
<div class="t" style="left:2687px;top:1498px;width:195px;text-align:center;font-size:21.5px;font-weight:bold;color:#15280a">8:00</div>
<div class="a" style="left:2887px;top:1482px;width:195px;height:52px;background:#a7b68d;border:2px solid #6f6f7e"></div>
<div class="t" style="left:2886px;top:1498px;width:195px;text-align:center;font-size:21.5px;font-weight:bold;color:#15280a">8:00</div>
<div class="a" style="left:3086px;top:1482px;width:195px;height:52px;background:#5c5c5c;border:2px solid #6f6f7e"></div>
<div class="t" style="left:3085px;top:1498px;width:195px;text-align:center;font-size:21.5px;font-weight:bold;color:#d0d0d0">0:00</div>
<div class="a" style="left:2090px;top:1538px;width:195px;height:52px;background:#c6c6c6;border:2px solid #6f6f7e"></div>
<div class="t" style="left:2089px;top:1554px;width:195px;text-align:center;font-size:21.5px;font-weight:bold;color:#5e5e5e">0:00</div>
<svg style="left:2098px;top:1550px" width="24" height="24" viewBox="0 0 24 24"><g fill="#3a5c98"><rect x="0" y="2" width="22.5" height="4"/><rect x="4.5" y="0" width="2.2" height="3"/><rect x="16.5" y="0" width="2.2" height="3"/><rect x="0" y="2" width="2" height="22"/><rect x="4.5" y="6" width="2" height="14"/><rect x="0" y="21.5" width="4" height="2.5"/><rect x="8" y="6" width="2" height="3.5"/><path d="M11.5 6 H14 L13 8.5Z"/><path d="M6 24 L8.5 20.5 H13 L16 24Z"/><path d="M14.5 20 L16.5 16.5 H21 L24 19 V20Z"/></g><g fill="none" stroke="#3a5c98" stroke-width="1.8"><rect x="8.3" y="12.3" width="4.8" height="4.8"/><rect x="16.3" y="8.3" width="4.8" height="4.8"/></g></svg>
<div class="a" style="left:2289px;top:1538px;width:195px;height:52px;background:#c6c6c6;border:2px solid #6f6f7e"></div>
<div class="t" style="left:2288px;top:1554px;width:195px;text-align:center;font-size:21.5px;font-weight:bold;color:#5e5e5e">0:00</div>
<svg style="left:2297px;top:1550px" width="24" height="24" viewBox="0 0 24 24"><g fill="#3a5c98"><rect x="0" y="2" width="22.5" height="4"/><rect x="4.5" y="0" width="2.2" height="3"/><rect x="16.5" y="0" width="2.2" height="3"/><rect x="0" y="2" width="2" height="22"/><rect x="4.5" y="6" width="2" height="14"/><rect x="0" y="21.5" width="4" height="2.5"/><rect x="8" y="6" width="2" height="3.5"/><path d="M11.5 6 H14 L13 8.5Z"/><path d="M6 24 L8.5 20.5 H13 L16 24Z"/><path d="M14.5 20 L16.5 16.5 H21 L24 19 V20Z"/></g><g fill="none" stroke="#3a5c98" stroke-width="1.8"><rect x="8.3" y="12.3" width="4.8" height="4.8"/><rect x="16.3" y="8.3" width="4.8" height="4.8"/></g></svg>
<div class="a" style="left:2489px;top:1538px;width:195px;height:52px;background:#c6c6c6;border:2px solid #6f6f7e"></div>
<div class="t" style="left:2488px;top:1554px;width:195px;text-align:center;font-size:21.5px;font-weight:bold;color:#5e5e5e">0:00</div>
<svg style="left:2497px;top:1550px" width="24" height="24" viewBox="0 0 24 24"><g fill="#3a5c98"><rect x="0" y="2" width="22.5" height="4"/><rect x="4.5" y="0" width="2.2" height="3"/><rect x="16.5" y="0" width="2.2" height="3"/><rect x="0" y="2" width="2" height="22"/><rect x="4.5" y="6" width="2" height="14"/><rect x="0" y="21.5" width="4" height="2.5"/><rect x="8" y="6" width="2" height="3.5"/><path d="M11.5 6 H14 L13 8.5Z"/><path d="M6 24 L8.5 20.5 H13 L16 24Z"/><path d="M14.5 20 L16.5 16.5 H21 L24 19 V20Z"/></g><g fill="none" stroke="#3a5c98" stroke-width="1.8"><rect x="8.3" y="12.3" width="4.8" height="4.8"/><rect x="16.3" y="8.3" width="4.8" height="4.8"/></g></svg>
<div class="a" style="left:2688px;top:1538px;width:195px;height:52px;background:#c6c6c6;border:2px solid #6f6f7e"></div>
<div class="t" style="left:2687px;top:1554px;width:195px;text-align:center;font-size:21.5px;font-weight:bold;color:#5e5e5e">0:00</div>
<svg style="left:2696px;top:1550px" width="24" height="24" viewBox="0 0 24 24"><g fill="#3a5c98"><rect x="0" y="2" width="22.5" height="4"/><rect x="4.5" y="0" width="2.2" height="3"/><rect x="16.5" y="0" width="2.2" height="3"/><rect x="0" y="2" width="2" height="22"/><rect x="4.5" y="6" width="2" height="14"/><rect x="0" y="21.5" width="4" height="2.5"/><rect x="8" y="6" width="2" height="3.5"/><path d="M11.5 6 H14 L13 8.5Z"/><path d="M6 24 L8.5 20.5 H13 L16 24Z"/><path d="M14.5 20 L16.5 16.5 H21 L24 19 V20Z"/></g><g fill="none" stroke="#3a5c98" stroke-width="1.8"><rect x="8.3" y="12.3" width="4.8" height="4.8"/><rect x="16.3" y="8.3" width="4.8" height="4.8"/></g></svg>
<div class="a" style="left:2887px;top:1538px;width:195px;height:52px;background:#c6c6c6;border:2px solid #6f6f7e"></div>
<div class="t" style="left:2886px;top:1554px;width:195px;text-align:center;font-size:21.5px;font-weight:bold;color:#5e5e5e">0:00</div>
<svg style="left:2895px;top:1550px" width="24" height="24" viewBox="0 0 24 24"><g fill="#3a5c98"><rect x="0" y="2" width="22.5" height="4"/><rect x="4.5" y="0" width="2.2" height="3"/><rect x="16.5" y="0" width="2.2" height="3"/><rect x="0" y="2" width="2" height="22"/><rect x="4.5" y="6" width="2" height="14"/><rect x="0" y="21.5" width="4" height="2.5"/><rect x="8" y="6" width="2" height="3.5"/><path d="M11.5 6 H14 L13 8.5Z"/><path d="M6 24 L8.5 20.5 H13 L16 24Z"/><path d="M14.5 20 L16.5 16.5 H21 L24 19 V20Z"/></g><g fill="none" stroke="#3a5c98" stroke-width="1.8"><rect x="8.3" y="12.3" width="4.8" height="4.8"/><rect x="16.3" y="8.3" width="4.8" height="4.8"/></g></svg>
<div class="a" style="left:3086px;top:1538px;width:195px;height:52px;background:#5c5c5c;border:2px solid #6f6f7e"></div>
<div class="t" style="left:3085px;top:1554px;width:195px;text-align:center;font-size:21.5px;font-weight:bold;color:#d0d0d0">0:00</div>
<div class="a" style="left:2090px;top:1594px;width:195px;height:52px;background:#a7b68d;border:2px solid #6f6f7e"></div>
<div class="t" style="left:2089px;top:1610px;width:195px;text-align:center;font-size:21.5px;font-weight:bold;color:#15280a">8:00</div>
<div class="a" style="left:2289px;top:1594px;width:195px;height:52px;background:#a7b68d;border:2px solid #6f6f7e"></div>
<div class="t" style="left:2288px;top:1610px;width:195px;text-align:center;font-size:21.5px;font-weight:bold;color:#15280a">8:00</div>
<div class="a" style="left:2489px;top:1594px;width:195px;height:52px;background:#a7b68d;border:2px solid #6f6f7e"></div>
<div class="t" style="left:2488px;top:1610px;width:195px;text-align:center;font-size:21.5px;font-weight:bold;color:#15280a">8:00</div>
<div class="a" style="left:2688px;top:1594px;width:195px;height:52px;background:#a7b68d;border:2px solid #6f6f7e"></div>
<div class="t" style="left:2687px;top:1610px;width:195px;text-align:center;font-size:21.5px;font-weight:bold;color:#15280a">8:00</div>
<div class="a" style="left:2887px;top:1594px;width:195px;height:52px;background:#a7b68d;border:2px solid #6f6f7e"></div>
<div class="t" style="left:2886px;top:1610px;width:195px;text-align:center;font-size:21.5px;font-weight:bold;color:#15280a">8:00</div>
<div class="a" style="left:3086px;top:1594px;width:195px;height:52px;background:#5c5c5c;border:2px solid #6f6f7e"></div>
<div class="t" style="left:3085px;top:1610px;width:195px;text-align:center;font-size:21.5px;font-weight:bold;color:#d0d0d0">0:00</div>
<div class="a" style="left:2090px;top:1650px;width:195px;height:52px;background:#a7b68d;border:2px solid #6f6f7e"></div>
<div class="t" style="left:2089px;top:1666px;width:195px;text-align:center;font-size:21.5px;font-weight:bold;color:#15280a">8:00</div>
<div class="a" style="left:2289px;top:1650px;width:195px;height:52px;background:#a7b68d;border:2px solid #6f6f7e"></div>
<div class="t" style="left:2288px;top:1666px;width:195px;text-align:center;font-size:21.5px;font-weight:bold;color:#15280a">8:00</div>
<div class="a" style="left:2489px;top:1650px;width:195px;height:52px;background:#a7b68d;border:2px solid #6f6f7e"></div>
<div class="t" style="left:2488px;top:1666px;width:195px;text-align:center;font-size:21.5px;font-weight:bold;color:#15280a">8:00</div>
<div class="a" style="left:2688px;top:1650px;width:195px;height:52px;background:#a7b68d;border:2px solid #6f6f7e"></div>
<div class="t" style="left:2687px;top:1666px;width:195px;text-align:center;font-size:21.5px;font-weight:bold;color:#15280a">8:00</div>
<div class="a" style="left:2887px;top:1650px;width:195px;height:52px;background:#a7b68d;border:2px solid #6f6f7e"></div>
<div class="t" style="left:2886px;top:1666px;width:195px;text-align:center;font-size:21.5px;font-weight:bold;color:#15280a">8:00</div>
<div class="a" style="left:3086px;top:1650px;width:195px;height:52px;background:#5c5c5c;border:2px solid #6f6f7e"></div>
<div class="t" style="left:3085px;top:1666px;width:195px;text-align:center;font-size:21.5px;font-weight:bold;color:#d0d0d0">0:00</div>
<div class="a" style="left:2090px;top:1706px;width:195px;height:52px;background:#a7b68d;border:2px solid #6f6f7e"></div>
<div class="t" style="left:2089px;top:1722px;width:195px;text-align:center;font-size:21.5px;font-weight:bold;color:#15280a">8:00</div>
<div class="a" style="left:2289px;top:1706px;width:195px;height:52px;background:#a7b68d;border:2px solid #6f6f7e"></div>
<div class="t" style="left:2288px;top:1722px;width:195px;text-align:center;font-size:21.5px;font-weight:bold;color:#15280a">8:00</div>
<div class="a" style="left:2489px;top:1706px;width:195px;height:52px;background:#a7b68d;border:2px solid #6f6f7e"></div>
<div class="t" style="left:2488px;top:1722px;width:195px;text-align:center;font-size:21.5px;font-weight:bold;color:#15280a">8:00</div>
<div class="a" style="left:2688px;top:1706px;width:195px;height:52px;background:#a7b68d;border:2px solid #6f6f7e"></div>
<div class="t" style="left:2687px;top:1722px;width:195px;text-align:center;font-size:21.5px;font-weight:bold;color:#15280a">8:00</div>
<div class="a" style="left:2887px;top:1706px;width:195px;height:52px;background:#a7b68d;border:2px solid #6f6f7e"></div>
<div class="t" style="left:2886px;top:1722px;width:195px;text-align:center;font-size:21.5px;font-weight:bold;color:#15280a">8:00</div>
<div class="a" style="left:3086px;top:1706px;width:195px;height:52px;background:#5c5c5c;border:2px solid #6f6f7e"></div>
<div class="t" style="left:3085px;top:1722px;width:195px;text-align:center;font-size:21.5px;font-weight:bold;color:#d0d0d0">0:00</div>
<div class="a" style="left:2090px;top:1762px;width:195px;height:52px;background:#a7b68d;border:2px solid #6f6f7e"></div>
<div class="t" style="left:2089px;top:1778px;width:195px;text-align:center;font-size:21.5px;font-weight:bold;color:#15280a">8:00</div>
<div class="a" style="left:2289px;top:1762px;width:195px;height:52px;background:#a7b68d;border:2px solid #6f6f7e"></div>
<div class="t" style="left:2288px;top:1778px;width:195px;text-align:center;font-size:21.5px;font-weight:bold;color:#15280a">8:00</div>
<div class="a" style="left:2489px;top:1762px;width:195px;height:52px;background:#a7b68d;border:2px solid #6f6f7e"></div>
<div class="t" style="left:2488px;top:1778px;width:195px;text-align:center;font-size:21.5px;font-weight:bold;color:#15280a">8:00</div>
<div class="a" style="left:2688px;top:1762px;width:195px;height:52px;background:#a7b68d;border:2px solid #6f6f7e"></div>
<div class="t" style="left:2687px;top:1778px;width:195px;text-align:center;font-size:21.5px;font-weight:bold;color:#15280a">8:00</div>
<div class="a" style="left:2887px;top:1762px;width:195px;height:52px;background:#a7b68d;border:2px solid #6f6f7e"></div>
<div class="t" style="left:2886px;top:1778px;width:195px;text-align:center;font-size:21.5px;font-weight:bold;color:#15280a">8:00</div>
<div class="a" style="left:3086px;top:1762px;width:195px;height:52px;background:#5c5c5c;border:2px solid #6f6f7e"></div>
<div class="t" style="left:3085px;top:1778px;width:195px;text-align:center;font-size:21.5px;font-weight:bold;color:#d0d0d0">0:00</div>
<div class="a" style="left:2090px;top:1818px;width:195px;height:52px;background:#a7b68d;border:2px solid #6f6f7e"></div>
<div class="t" style="left:2089px;top:1834px;width:195px;text-align:center;font-size:21.5px;font-weight:bold;color:#15280a">8:00</div>
<div class="a" style="left:2289px;top:1818px;width:195px;height:52px;background:#a7b68d;border:2px solid #6f6f7e"></div>
<div class="t" style="left:2288px;top:1834px;width:195px;text-align:center;font-size:21.5px;font-weight:bold;color:#15280a">8:00</div>
<div class="a" style="left:2489px;top:1818px;width:195px;height:52px;background:#a7b68d;border:2px solid #6f6f7e"></div>
<div class="t" style="left:2488px;top:1834px;width:195px;text-align:center;font-size:21.5px;font-weight:bold;color:#15280a">8:00</div>
<div class="a" style="left:2688px;top:1818px;width:195px;height:52px;background:#a7b68d;border:2px solid #6f6f7e"></div>
<div class="t" style="left:2687px;top:1834px;width:195px;text-align:center;font-size:21.5px;font-weight:bold;color:#15280a">8:00</div>
<div class="a" style="left:2887px;top:1818px;width:195px;height:52px;background:#a7b68d;border:2px solid #6f6f7e"></div>
<div class="t" style="left:2886px;top:1834px;width:195px;text-align:center;font-size:21.5px;font-weight:bold;color:#15280a">8:00</div>
<div class="a" style="left:3086px;top:1818px;width:195px;height:52px;background:#5c5c5c;border:2px solid #6f6f7e"></div>
<div class="t" style="left:3085px;top:1834px;width:195px;text-align:center;font-size:21.5px;font-weight:bold;color:#d0d0d0">0:00</div>
<div class="a" style="left:2090px;top:1874px;width:195px;height:52px;background:#a7b68d;border:2px solid #6f6f7e"></div>
<div class="t" style="left:2089px;top:1890px;width:195px;text-align:center;font-size:21.5px;font-weight:bold;color:#15280a">8:00</div>
<div class="a" style="left:2289px;top:1874px;width:195px;height:52px;background:#a7b68d;border:2px solid #6f6f7e"></div>
<div class="t" style="left:2288px;top:1890px;width:195px;text-align:center;font-size:21.5px;font-weight:bold;color:#15280a">8:00</div>
<div class="a" style="left:2489px;top:1874px;width:195px;height:52px;background:#a7b68d;border:2px solid #6f6f7e"></div>
<div class="t" style="left:2488px;top:1890px;width:195px;text-align:center;font-size:21.5px;font-weight:bold;color:#15280a">8:00</div>
<div class="a" style="left:2688px;top:1874px;width:195px;height:52px;background:#a7b68d;border:2px solid #6f6f7e"></div>
<div class="t" style="left:2687px;top:1890px;width:195px;text-align:center;font-size:21.5px;font-weight:bold;color:#15280a">8:00</div>
<div class="a" style="left:2887px;top:1874px;width:195px;height:52px;background:#a7b68d;border:2px solid #6f6f7e"></div>
<div class="t" style="left:2886px;top:1890px;width:195px;text-align:center;font-size:21.5px;font-weight:bold;color:#15280a">8:00</div>
<div class="a" style="left:3086px;top:1874px;width:195px;height:52px;background:#5c5c5c;border:2px solid #6f6f7e"></div>
<div class="t" style="left:3085px;top:1890px;width:195px;text-align:center;font-size:21.5px;font-weight:bold;color:#d0d0d0">0:00</div>
<div class="a" style="left:2090px;top:1930px;width:195px;height:52px;background:#a7b68d;border:2px solid #6f6f7e"></div>
<div class="t" style="left:2089px;top:1946px;width:195px;text-align:center;font-size:21.5px;font-weight:bold;color:#15280a">8:00</div>
<div class="a" style="left:2289px;top:1930px;width:195px;height:52px;background:#a7b68d;border:2px solid #6f6f7e"></div>
<div class="t" style="left:2288px;top:1946px;width:195px;text-align:center;font-size:21.5px;font-weight:bold;color:#15280a">8:00</div>
<div class="a" style="left:2489px;top:1930px;width:195px;height:52px;background:#a7b68d;border:2px solid #6f6f7e"></div>
<div class="t" style="left:2488px;top:1946px;width:195px;text-align:center;font-size:21.5px;font-weight:bold;color:#15280a">8:00</div>
<div class="a" style="left:2688px;top:1930px;width:195px;height:52px;background:#a7b68d;border:2px solid #6f6f7e"></div>
<div class="t" style="left:2687px;top:1946px;width:195px;text-align:center;font-size:21.5px;font-weight:bold;color:#15280a">8:00</div>
<div class="a" style="left:2887px;top:1930px;width:195px;height:52px;background:#a7b68d;border:2px solid #6f6f7e"></div>
<div class="t" style="left:2886px;top:1946px;width:195px;text-align:center;font-size:21.5px;font-weight:bold;color:#15280a">8:00</div>
<div class="a" style="left:3086px;top:1930px;width:195px;height:52px;background:#5c5c5c;border:2px solid #6f6f7e"></div>
<div class="t" style="left:3085px;top:1946px;width:195px;text-align:center;font-size:21.5px;font-weight:bold;color:#d0d0d0">0:00</div>
<div class="a" style="left:3284px;top:1145px;width:34px;height:793px;background:#cbcbcb;border-left:2px solid #a9a9a9;border-right:2px solid #bdbdbd"></div>
<div class="a" style="left:3295px;top:1156px;width:15px;height:289px;background:#9c9c9c;border-radius:8px"></div>
<div class="a" style="left:3330px;top:156px;width:30px;height:1782px;background:#c9c9c9;border-left:2px solid #bdbdbd"></div>
<div class="a" style="left:3339px;top:163px;width:15px;height:1630px;background:#9c9c9c;border-radius:8px"></div></div>
<div id="modal" class="a" style="left:730px;top:210px;width:1900px;height:1520px;background:#fff;box-shadow:0 0 28px 8px rgba(0,0,0,.38)"><div class="t" style="left:15px;top:28px;font-size:32px;color:#1a1a1a">Configure Gantt View Properties: Default Settings</div>
<svg style="left:22px;top:90px" width="32" height="32" viewBox="0 0 32 32"><circle cx="16" cy="16" r="14" fill="none" stroke="#3f73c4" stroke-width="2.5"/><circle cx="16" cy="9" r="2.2" fill="#3f73c4"/><path d="M12 14 H17 V23 M12 23.5 H20" fill="none" stroke="#3f73c4" stroke-width="2.8"/></svg>
<div class="t" style="left:64px;top:99px;font-size:22.3px;color:#3a6199">Specify the default properties for display in the data table of the Gantt view. These settings apply to all schedules. <span style="color:#0a22e6;text-decoration:underline">More information</span></div>
<div class="a" style="left:20px;top:140px;width:1850px;height:84px;background:#3c5c80"></div>
<div class="a" style="left:330px;top:140px;width:255px;height:84px;background:#4b78bb"></div>
<div class="a" style="left:20px;top:217px;width:1850px;height:7px;background:#4a78c0"></div>
<div class="a" style="left:330px;top:217px;width:255px;height:7px;background:#6aacf2"></div>
<div class="t" style="left:41px;top:170px;font-size:29.3px;color:#fff">Resource Properties</div>
<div class="t" style="left:350px;top:170px;font-size:29.8px;color:#fff">Work Properties</div>
<div class="a" style="left:32px;top:234px;width:1838px;height:59px;background:#ebebeb;border-bottom:2px solid #b4b4b4"></div>
<div class="a" style="left:338px;top:234px;width:1px;height:57px;background:#d4d4d4"></div>
<div class="a" style="left:620px;top:234px;width:1px;height:57px;background:#d4d4d4"></div>
<div class="a" style="left:707px;top:234px;width:1px;height:57px;background:#d4d4d4"></div>
<div class="a" style="left:913px;top:234px;width:1px;height:57px;background:#d4d4d4"></div>
<div class="a" style="left:1803px;top:234px;width:1px;height:57px;background:#d4d4d4"></div>
<div class="t" style="left:46px;top:251px;font-size:32px;color:#1a1a1a">System Properties</div>
<svg style="left:362px;top:245px" width="30" height="30" viewBox="0 0 30 30"><rect x="1.5" y="1.5" width="27" height="27" rx="3.5" fill="#fff" stroke="#5c8c27" stroke-width="1.8"/><rect x="3" y="2.6" width="24" height="1.5" fill="#d8e4cc"/><path d="M3.9 4 H26 V7 L20.7 12.8 L22.9 16.5 L20 19.5 L12.3 25.7 L12 15 L3.9 7 Z" fill="#5c8c27"/><path d="M8.5 7.6 H21.5 L14.6 14.2 Z" fill="#fff"/><rect x="13.5" y="13.5" width="1.6" height="8" fill="#9fc46c"/></svg>
<div class="t" style="left:419px;top:253px;font-size:23px;color:#2f5480;text-decoration:underline">Filter</div>
<svg style="left:510px;top:255px" width="13" height="15" viewBox="0 0 13 15"><path d="M2 1 L10 7.5 L2 14" fill="none" stroke="#a0a0a0" stroke-width="2.5"/></svg>
<svg style="left:559px;top:245px" width="30" height="30" viewBox="0 0 30 30"><circle cx="11.5" cy="11.5" r="8.8" fill="none" stroke="#4a78c0" stroke-width="3.6"/><path d="M19.5 19.5 L26 25.5" stroke="#4a78c0" stroke-width="6"/></svg>
<svg style="left:646px;top:246px" width="28" height="28" viewBox="0 0 28 28"><path d="M1.5 2 H24.5 L15 13 V25 L11 21 V13 Z" fill="none" stroke="#4a78c0" stroke-width="3.2" stroke-linejoin="round"/><circle cx="19.5" cy="19.5" r="6.5" fill="#4a78c0"/><path d="M16.8 16.8 L22.2 22.2 M22.2 16.8 L16.8 22.2" stroke="#ebebeb" stroke-width="1.6"/></svg>
<svg style="left:763px;top:247px" width="26" height="26" viewBox="0 0 26 26"><path d="M13 24 V4 M3 13 L13 3 L23 13" fill="none" stroke="#d3d3d3" stroke-width="4"/></svg>
<svg style="left:853px;top:247px" width="26" height="26" viewBox="0 0 26 26"><path d="M13 2 V22 M3 13 L13 23 L23 13" fill="none" stroke="#d3d3d3" stroke-width="4"/></svg>
<svg style="left:939px;top:247px" width="27" height="26" viewBox="0 0 27 26"><path d="M26 13 H4 M13 3 L3 13 L13 23" fill="none" stroke="#d3d3d3" stroke-width="4"/></svg>
<div class="t" style="left:994px;top:254px;font-family:'Liberation Mono',monospace;font-size:25px;letter-spacing:-0.8px;color:#111">1 - 1 of 1</div>
<svg style="left:1172px;top:247px" width="27" height="26" viewBox="0 0 27 26"><path d="M1 13 H23 M14 3 L24 13 L14 23" fill="none" stroke="#d3d3d3" stroke-width="4"/></svg>
<svg style="left:1724px;top:247px" width="33" height="33" viewBox="0 0 33 33"><path d="M16 0 V21 M6 11 L16 21 L26 11" fill="none" stroke="#4b78bb" stroke-width="4"/><path d="M2 18 V30 H30 V18" fill="none" stroke="#4b78bb" stroke-width="4"/></svg>
<svg style="left:1829px;top:247px" width="26" height="24" viewBox="0 0 26 24"><rect x="0" y="0" width="26" height="24" fill="#4b78bb"/><path d="M12.5 10.5 L4 19 M4 11 V19 H12" fill="none" stroke="#f0f0f0" stroke-width="2.6"/></svg>
<div class="a" style="left:32px;top:303px;width:1838px;height:114px;background:#f8f8f8"></div>
<div class="t" style="left:118px;top:318px;font-size:24px;font-weight:bold;color:#3e3e3e;letter-spacing:1px">Property Name</div>
<div class="t" style="left:591px;top:318px;font-size:24px;font-weight:bold;color:#3e3e3e;letter-spacing:1px">Title</div>
<div class="t" style="left:1065px;top:318px;font-size:24px;font-weight:bold;color:#3e3e3e;letter-spacing:1px">Show in Gantt View table?</div>
<div class="t" style="left:1409px;top:318px;font-size:24px;font-weight:bold;color:#3e3e3e;letter-spacing:1px">Display Order</div>
<div class="t" style="left:1610px;top:318px;font-size:24px;font-weight:bold;color:#3e3e3e;letter-spacing:1px">Column Width</div>
<div class="a" style="left:109px;top:409px;width:396px;height:2px;background:#262626"></div>
<div class="a" style="left:583px;top:409px;width:396px;height:2px;background:#262626"></div>
<div class="a" style="left:1057px;top:409px;width:72px;height:2px;background:#262626"></div>
<div class="a" style="left:1515px;top:409px;width:72px;height:2px;background:#262626"></div>
<div class="a" style="left:1719px;top:409px;width:72px;height:2px;background:#262626"></div>
<div class="t" style="left:587px;top:376px;font-size:23px;color:#111">craft</div>
<svg style="left:1144px;top:374px" width="30" height="30" viewBox="0 0 30 30"><circle cx="11.5" cy="11.5" r="8.8" fill="none" stroke="#4a78c0" stroke-width="3.6"/><path d="M19.5 19.5 L26 25.5" stroke="#4a78c0" stroke-width="6"/></svg>
<div class="a" style="left:32px;top:417px;width:1838px;height:60px;background:#e0f0f8"></div>
<svg style="left:62px;top:439px" width="16" height="20" viewBox="0 0 16 20"><path d="M3 2 L12 10 L3 18" fill="none" stroke="#4a78c0" stroke-width="4.2"/></svg>
<div class="t" style="left:116px;top:438px;font-size:21px;letter-spacing:-0.3px;color:#111">CRAFT</div>
<div class="a" style="left:109px;top:470px;width:400px;height:2px;background:repeating-linear-gradient(90deg,#d6d1cd 0 6px,transparent 6px 12px)"></div>
<div class="t" style="left:589px;top:440px;font-size:22px;color:#111">Craft</div>
<div class="a" style="left:587px;top:470px;width:396px;height:2px;background:#262626"></div>
<svg style="left:1064px;top:439px" width="30" height="30" viewBox="0 0 30 30"><rect x="0.5" y="0.5" width="29" height="29" fill="#4b78bb"/><path d="M4.5 14.5 L12 22 L26.5 7.5" fill="none" stroke="#fff" stroke-width="3.8"/></svg>
<div class="t" style="left:1541px;top:440px;font-size:23px;color:#111">69</div>
<div class="a" style="left:1499px;top:470px;width:72px;height:2px;background:#262626"></div>
<div class="a" style="left:1703px;top:470px;width:72px;height:2px;background:#262626"></div>
<svg style="left:1821px;top:434px" width="22" height="30" viewBox="0 0 22 30"><rect x="5" y="0" width="11" height="3" fill="#4b78bb"/><rect x="0" y="5" width="21" height="3" fill="#4b78bb"/><path d="M1.5 8 H19.5 L19 29 H2 Z" fill="#4b78bb"/><path d="M6 10 V26 M10.8 10 V26 M15.5 10 V26" stroke="#e0f0f8" stroke-width="2"/></svg>
<div class="a" style="left:36px;top:487px;width:149px;height:58px;background:#4b78bb"></div>
<div class="t" style="left:61px;top:505px;font-size:23.2px;color:#fff">New Row</div>
<div class="a" style="left:32px;top:589px;width:1578px;height:59px;background:#ebebeb;border-bottom:2px solid #b4b4b4"></div>
<div class="a" style="left:497px;top:589px;width:1px;height:57px;background:#d4d4d4"></div>
<div class="a" style="left:780px;top:589px;width:1px;height:57px;background:#d4d4d4"></div>
<div class="a" style="left:866px;top:589px;width:1px;height:57px;background:#d4d4d4"></div>
<div class="a" style="left:1071px;top:589px;width:1px;height:57px;background:#d4d4d4"></div>
<div class="a" style="left:1544px;top:589px;width:1px;height:57px;background:#d4d4d4"></div>
<div class="t" style="left:47px;top:606px;font-size:32.5px;color:#161616">Object and Attribute Mapping</div>
<svg style="left:524px;top:602px" width="25" height="25" viewBox="0 0 25 25"><path d="M1 2 H24 L15 12 V14 L17 15 L13 19 V24 L10 21 V12 Z" fill="#4a78c0"/><path d="M4 4 H21 L14 11" fill="#ebebeb"/></svg>
<div class="t" style="left:578px;top:608px;font-size:23px;color:#2f5480;text-decoration:underline">Filter</div>
<svg style="left:668px;top:610px" width="13" height="15" viewBox="0 0 13 15"><path d="M2 1 L10 7.5 L2 14" fill="none" stroke="#a0a0a0" stroke-width="2.5"/></svg>
<svg style="left:719px;top:600px" width="30" height="30" viewBox="0 0 30 30"><circle cx="11.5" cy="11.5" r="8.8" fill="none" stroke="#d3d3d3" stroke-width="3.6"/><path d="M19.5 19.5 L26 25.5" stroke="#d3d3d3" stroke-width="6"/></svg>
<svg style="left:805px;top:601px" width="28" height="28" viewBox="0 0 28 28"><path d="M1.5 2 H24.5 L15 13 V25 L11 21 V13 Z" fill="none" stroke="#d3d3d3" stroke-width="3.2" stroke-linejoin="round"/><circle cx="19.5" cy="19.5" r="6.5" fill="#d3d3d3"/><path d="M16.8 16.8 L22.2 22.2 M22.2 16.8 L16.8 22.2" stroke="#ebebeb" stroke-width="1.6"/></svg>
<svg style="left:922px;top:602px" width="26" height="26" viewBox="0 0 26 26"><path d="M13 24 V4 M3 13 L13 3 L23 13" fill="none" stroke="#d3d3d3" stroke-width="4"/></svg>
<svg style="left:1012px;top:602px" width="26" height="26" viewBox="0 0 26 26"><path d="M13 2 V22 M3 13 L13 23 L23 13" fill="none" stroke="#d3d3d3" stroke-width="4"/></svg>
<svg style="left:1098px;top:602px" width="27" height="26" viewBox="0 0 27 26"><path d="M26 13 H4 M13 3 L3 13 L13 23" fill="none" stroke="#d3d3d3" stroke-width="4"/></svg>
<div class="t" style="left:1153px;top:609px;font-family:'Liberation Mono',monospace;font-size:25px;letter-spacing:-0.8px;color:#111">1 - 1 of 1</div>
<svg style="left:1332px;top:602px" width="27" height="26" viewBox="0 0 27 26"><path d="M1 13 H23 M14 3 L24 13 L14 23" fill="none" stroke="#d3d3d3" stroke-width="4"/></svg>
<svg style="left:1465px;top:602px" width="33" height="33" viewBox="0 0 33 33"><path d="M16 0 V21 M6 11 L16 21 L26 11" fill="none" stroke="#4b78bb" stroke-width="4"/><path d="M2 18 V30 H30 V18" fill="none" stroke="#4b78bb" stroke-width="4"/></svg>
<svg style="left:1570px;top:602px" width="26" height="24" viewBox="0 0 26 24"><rect x="0" y="0" width="26" height="24" fill="#4b78bb"/><path d="M12.5 10.5 L4 19 M4 11 V19 H12" fill="none" stroke="#f0f0f0" stroke-width="2.6"/></svg>
<div class="a" style="left:32px;top:658px;width:1578px;height:52px;background:#f8f8f8"></div>
<div class="t" style="left:139px;top:673px;font-size:24px;font-weight:bold;color:#3e3e3e;letter-spacing:1px">Property Name</div>
<div class="t" style="left:714px;top:673px;font-size:24px;font-weight:bold;color:#3e3e3e;letter-spacing:1px">Object Name</div>
<div class="t" style="left:957px;top:673px;font-size:24px;font-weight:bold;color:#3e3e3e;letter-spacing:1px">Attribute Name</div>
<div class="a" style="left:32px;top:710px;width:1578px;height:64px;background:#e0f0f8"></div>
<svg style="left:59px;top:736px" width="22" height="16" viewBox="0 0 22 16"><path d="M2 3 L11 12 L20 3" fill="none" stroke="#4a78c0" stroke-width="4.2"/></svg>
<div class="t" style="left:135px;top:735px;font-size:21px;letter-spacing:-0.3px;color:#111">CRAFT</div>
<div class="a" style="left:712px;top:730px;width:157px;height:30px;overflow:hidden"><div class="t" style="left:0;top:4px;font-size:21px;color:#111">WMASSIGNMENT</div></div>
<div class="a" style="left:710px;top:764px;width:159px;height:2px;background:repeating-linear-gradient(90deg,#d6d1cd 0 6px,transparent 6px 12px)"></div>
<svg style="left:885px;top:733px" width="30" height="30" viewBox="0 0 30 30"><circle cx="11.5" cy="11.5" r="8.8" fill="none" stroke="#4a78c0" stroke-width="3.6"/><path d="M19.5 19.5 L26 25.5" stroke="#4a78c0" stroke-width="6"/></svg>
<div class="t" style="left:954px;top:732px;font-size:21px;letter-spacing:-0.3px;color:#111">CRAFT</div>
<div class="a" style="left:952px;top:764px;width:396px;height:2px;background:#262626"></div>
<svg style="left:1366px;top:733px" width="25" height="30" viewBox="0 0 25 30"><g fill="#4b78bb"><rect x="0" y="0" width="3.2" height="16"/><rect x="0" y="6.5" width="24" height="2.8"/><rect x="0" y="13" width="20.5" height="3"/><rect x="6.3" y="15" width="3" height="13.5"/><rect x="6.3" y="19.5" width="17.7" height="2.8"/><rect x="6.3" y="25.7" width="14.2" height="2.8"/></g></svg>
<svg style="left:1540px;top:729px" width="22" height="30" viewBox="0 0 22 30"><rect x="5" y="0" width="11" height="3" fill="#4b78bb"/><rect x="0" y="5" width="21" height="3" fill="#4b78bb"/><path d="M1.5 8 H19.5 L19 29 H2 Z" fill="#4b78bb"/><path d="M6 10 V26 M10.8 10 V26 M15.5 10 V26" stroke="#e0f0f8" stroke-width="2"/></svg>
<div class="a" style="left:32px;top:774px;width:1578px;height:517px;background:#fff;border:2px solid #c9c9c9"></div>
<div class="a" style="left:34px;top:776px;width:1574px;height:69px;background:#ebebeb;border-bottom:1px solid #d3dee9"></div>
<div class="t" style="left:53px;top:801px;font-size:22px;color:#111">Details</div>
<div class="t" style="left:55px;top:888px;font-size:22px;color:#444">Property Name:</div>
<div class="t" style="left:57px;top:928px;font-size:21px;letter-spacing:-0.3px;color:#111">CRAFT</div>
<div class="a" style="left:54px;top:960px;width:527px;height:2px;background:repeating-linear-gradient(90deg,#d6d1cd 0 6px,transparent 6px 12px)"></div>
<div class="t" style="left:55px;top:989px;font-size:22px;color:#444">Object Name:</div>
<div class="a" style="left:57px;top:1026px;width:155px;height:30px;overflow:hidden"><div class="t" style="left:0;top:4px;font-size:21px;color:#111">WMASSIGNMENT</div></div>
<div class="a" style="left:54px;top:1060px;width:160px;height:2px;background:repeating-linear-gradient(90deg,#d6d1cd 0 6px,transparent 6px 12px)"></div>
<svg style="left:225px;top:1026px" width="30" height="30" viewBox="0 0 30 30"><circle cx="11.5" cy="11.5" r="8.8" fill="none" stroke="#4a78c0" stroke-width="3.6"/><path d="M19.5 19.5 L26 25.5" stroke="#4a78c0" stroke-width="6"/></svg>
<svg style="left:57px;top:1086px" width="12" height="12" viewBox="0 0 12 12"><path d="M6 0 L7.3 4.7 L12 6 L7.3 7.3 L6 12 L4.7 7.3 L0 6 L4.7 4.7 Z" fill="#e2621f"/></svg>
<div class="t" style="left:74px;top:1089px;font-size:22px;font-weight:bold;color:#3a3a3a">Attribute Name:</div>
<div class="a" style="left:56px;top:1125px;width:67px;height:28px;background:#b9d7f8"></div>
<div class="t" style="left:57px;top:1128px;font-size:21px;letter-spacing:-0.3px;color:#111">CRAFT</div>
<div class="a" style="left:54px;top:1160px;width:528px;height:2.5px;background:#4472c4"></div>
<svg style="left:597px;top:1126px" width="25" height="30" viewBox="0 0 25 30"><g fill="#4b78bb"><rect x="0" y="0" width="3.2" height="16"/><rect x="0" y="6.5" width="24" height="2.8"/><rect x="0" y="13" width="20.5" height="3"/><rect x="6.3" y="15" width="3" height="13.5"/><rect x="6.3" y="19.5" width="17.7" height="2.8"/><rect x="6.3" y="25.7" width="14.2" height="2.8"/></g></svg>
<div class="t" style="left:55px;top:1190px;font-size:22px;color:#444">Applink Object:</div>
<div class="a" style="left:54px;top:1260px;width:160px;height:2.5px;background:#262626"></div>
<svg style="left:225px;top:1226px" width="30" height="30" viewBox="0 0 30 30"><circle cx="11.5" cy="11.5" r="8.8" fill="none" stroke="#4a78c0" stroke-width="3.6"/><path d="M19.5 19.5 L26 25.5" stroke="#4a78c0" stroke-width="6"/></svg>
<div class="a" style="left:36px;top:1302px;width:149px;height:57px;background:#4b78bb"></div>
<div class="t" style="left:61px;top:1319px;font-size:23.2px;color:#fff">New Row</div>
<div class="a" style="left:1509px;top:1438px;width:108px;height:57px;background:#fff;border:3px solid #4b78bb"></div>
<div class="t" style="left:1533px;top:1456px;font-size:24px;color:#3b6fc0">Apply</div>
<div class="a" style="left:1632px;top:1438px;width:80px;height:57px;background:#4b78bb"></div>
<div class="t" style="left:1655px;top:1456px;font-size:23px;letter-spacing:-0.5px;color:#fff">OK</div>
<div class="a" style="left:1725px;top:1438px;width:120px;height:57px;background:#fff;border:3px solid #4b78bb"></div>
<div class="t" style="left:1749px;top:1458px;font-size:23px;color:#3b6fc0">Cancel</div></div>
</body></html>
